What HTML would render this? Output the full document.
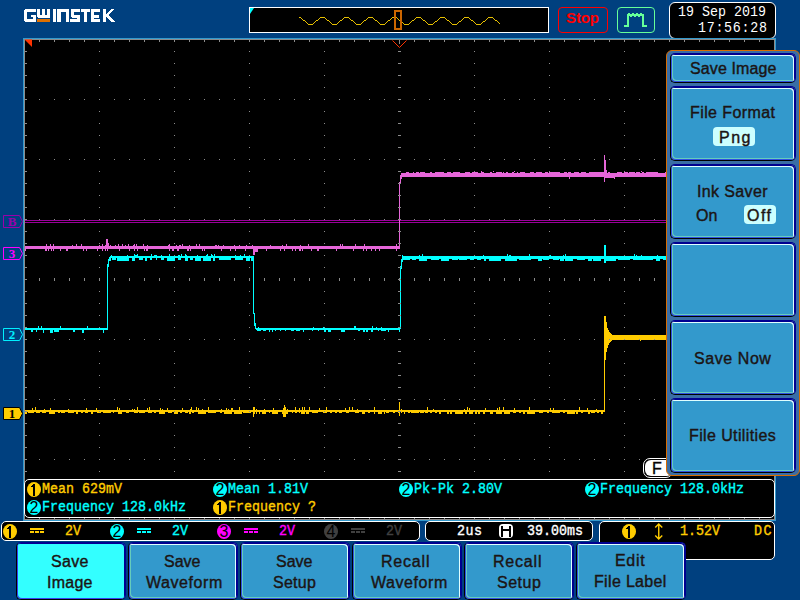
<!DOCTYPE html>
<html><head><meta charset="utf-8"><style>
html,body{margin:0;padding:0}
body{width:800px;height:600px;overflow:hidden;position:relative;background:#00407f}
.sb{position:absolute;font-family:"Liberation Sans",sans-serif;font-weight:bold;color:#1c1414;white-space:nowrap;line-height:1}
.tx{position:absolute;font-family:"Liberation Sans",sans-serif;white-space:nowrap;line-height:16px;-webkit-text-stroke:0.4px #1c1414}
.mono{position:absolute;font-family:"Liberation Mono",monospace;font-weight:normal;font-size:13.333px;line-height:16px;white-space:pre;-webkit-text-stroke:0.35px currentColor;transform:scaleY(1.14);transform-origin:0 0}
.mk{position:absolute;font-weight:bold;font-size:13px;line-height:15px;width:16px;text-align:center}
.cn{position:absolute;font-family:"Liberation Sans",sans-serif;font-size:16px;line-height:15px;width:14px;text-align:center}
.btn{position:absolute;box-sizing:border-box;border:1px solid;border-color:#000090 #000090 #000 #000;border-radius:5px;background:#3399cc;box-shadow:inset -1px 1px 0 #000090,inset 1px -1px 0 #3050e0,inset -2px 2px 0 #e0ffff,inset 2px -2px 0 #66ccbb}
.btn.sel{background:#33ffff;border-width:1px;box-shadow:inset 1px -1px 0 #3344ee,inset -1px 1px 0 #000090}
</style></head><body>
<svg width="120" height="30" style="position:absolute;left:0;top:0" shape-rendering="crispEdges">
<g fill="#fff">
<path d="M24,10L25,9H36V12H27V19H33V17H31V15H36V22H25L24,21Z"/>
<path d="M37,9h3v6h2v-6h3v6h2v-6h3v8l-1,1h-11l-1-1z"/>
<rect x="53" y="9" width="3" height="13"/>
<path d="M57,9h11l1,1v12h-3v-10h-5v10h-4z"/>
<path d="M71,9h9v3h-6v3h5l1,1v6h-10v-3h7v-1h-5l-1-1z"/>
<path d="M81,9h9v3h-3v10h-3v-10h-3z"/>
<path d="M91,9h9v3h-6v3h5v3h-5v1h6v3h-9z"/>
<path d="M103,9h3v5l5-5h3.5l-6,6 6.5,7h-4l-5-5.5v5.5h-3z"/>
</g>
<rect x="37" y="19" width="13" height="3" fill="#e07000"/>
</svg>
<div style="position:absolute;left:249px;top:7px;width:300px;height:26px;box-sizing:border-box;border:1px solid #fff;background:#000"></div>
<svg width="800" height="40" style="position:absolute;left:0;top:0">
<polygon points="250,8 254,8 250,14" fill="#00ffff"/>
<g fill="#e6bf00" shape-rendering="crispEdges"><rect x="299" y="17" width="1" height="1"/><rect x="300" y="17" width="1" height="1"/><rect x="301" y="18" width="1" height="1"/><rect x="302" y="19" width="1" height="1"/><rect x="303" y="20" width="1" height="1"/><rect x="304" y="20" width="1" height="1"/><rect x="305" y="21" width="1" height="1"/><rect x="306" y="22" width="1" height="1"/><rect x="307" y="23" width="1" height="1"/><rect x="308" y="24" width="1" height="1"/><rect x="309" y="24" width="1" height="1"/><rect x="310" y="24" width="1" height="1"/><rect x="311" y="24" width="1" height="1"/><rect x="312" y="24" width="1" height="1"/><rect x="313" y="23" width="1" height="1"/><rect x="314" y="22" width="1" height="1"/><rect x="315" y="21" width="1" height="1"/><rect x="316" y="20" width="1" height="1"/><rect x="317" y="20" width="1" height="1"/><rect x="318" y="19" width="1" height="1"/><rect x="319" y="18" width="1" height="1"/><rect x="320" y="17" width="1" height="1"/><rect x="321" y="17" width="1" height="1"/><rect x="322" y="17" width="1" height="1"/><rect x="323" y="17" width="1" height="1"/><rect x="324" y="17" width="1" height="1"/><rect x="325" y="18" width="1" height="1"/><rect x="326" y="19" width="1" height="1"/><rect x="327" y="20" width="1" height="1"/><rect x="328" y="20" width="1" height="1"/><rect x="329" y="21" width="1" height="1"/><rect x="330" y="22" width="1" height="1"/><rect x="331" y="23" width="1" height="1"/><rect x="332" y="24" width="1" height="1"/><rect x="333" y="24" width="1" height="1"/><rect x="334" y="24" width="1" height="1"/><rect x="335" y="24" width="1" height="1"/><rect x="336" y="24" width="1" height="1"/><rect x="337" y="23" width="1" height="1"/><rect x="338" y="22" width="1" height="1"/><rect x="339" y="21" width="1" height="1"/><rect x="340" y="20" width="1" height="1"/><rect x="341" y="20" width="1" height="1"/><rect x="342" y="19" width="1" height="1"/><rect x="343" y="18" width="1" height="1"/><rect x="344" y="17" width="1" height="1"/><rect x="345" y="17" width="1" height="1"/><rect x="346" y="17" width="1" height="1"/><rect x="347" y="17" width="1" height="1"/><rect x="348" y="17" width="1" height="1"/><rect x="349" y="18" width="1" height="1"/><rect x="350" y="19" width="1" height="1"/><rect x="351" y="20" width="1" height="1"/><rect x="352" y="20" width="1" height="1"/><rect x="353" y="21" width="1" height="1"/><rect x="354" y="22" width="1" height="1"/><rect x="355" y="23" width="1" height="1"/><rect x="356" y="24" width="1" height="1"/><rect x="357" y="24" width="1" height="1"/><rect x="358" y="24" width="1" height="1"/><rect x="359" y="24" width="1" height="1"/><rect x="360" y="24" width="1" height="1"/><rect x="361" y="23" width="1" height="1"/><rect x="362" y="22" width="1" height="1"/><rect x="363" y="21" width="1" height="1"/><rect x="364" y="20" width="1" height="1"/><rect x="365" y="20" width="1" height="1"/><rect x="366" y="19" width="1" height="1"/><rect x="367" y="18" width="1" height="1"/><rect x="368" y="17" width="1" height="1"/><rect x="369" y="17" width="1" height="1"/><rect x="370" y="17" width="1" height="1"/><rect x="371" y="17" width="1" height="1"/><rect x="372" y="17" width="1" height="1"/><rect x="373" y="18" width="1" height="1"/><rect x="374" y="19" width="1" height="1"/><rect x="375" y="20" width="1" height="1"/><rect x="376" y="20" width="1" height="1"/><rect x="377" y="21" width="1" height="1"/><rect x="378" y="22" width="1" height="1"/><rect x="379" y="23" width="1" height="1"/><rect x="380" y="24" width="1" height="1"/><rect x="381" y="24" width="1" height="1"/><rect x="382" y="24" width="1" height="1"/><rect x="383" y="24" width="1" height="1"/><rect x="384" y="24" width="1" height="1"/><rect x="385" y="23" width="1" height="1"/><rect x="386" y="22" width="1" height="1"/><rect x="387" y="21" width="1" height="1"/><rect x="388" y="20" width="1" height="1"/><rect x="389" y="20" width="1" height="1"/><rect x="390" y="19" width="1" height="1"/><rect x="391" y="18" width="1" height="1"/><rect x="392" y="17" width="1" height="1"/><rect x="393" y="17" width="1" height="1"/><rect x="394" y="17" width="1" height="1"/><rect x="395" y="17" width="1" height="1"/><rect x="396" y="17" width="1" height="1"/><rect x="397" y="18" width="1" height="1"/><rect x="398" y="19" width="1" height="1"/><rect x="399" y="20" width="1" height="1"/><rect x="400" y="20" width="1" height="1"/><rect x="401" y="21" width="1" height="1"/><rect x="402" y="22" width="1" height="1"/><rect x="403" y="23" width="1" height="1"/><rect x="404" y="24" width="1" height="1"/><rect x="405" y="24" width="1" height="1"/><rect x="406" y="24" width="1" height="1"/><rect x="407" y="24" width="1" height="1"/><rect x="408" y="24" width="1" height="1"/><rect x="409" y="23" width="1" height="1"/><rect x="410" y="22" width="1" height="1"/><rect x="411" y="21" width="1" height="1"/><rect x="412" y="20" width="1" height="1"/><rect x="413" y="20" width="1" height="1"/><rect x="414" y="19" width="1" height="1"/><rect x="415" y="18" width="1" height="1"/><rect x="416" y="17" width="1" height="1"/><rect x="417" y="17" width="1" height="1"/><rect x="418" y="17" width="1" height="1"/><rect x="419" y="17" width="1" height="1"/><rect x="420" y="17" width="1" height="1"/><rect x="421" y="18" width="1" height="1"/><rect x="422" y="19" width="1" height="1"/><rect x="423" y="20" width="1" height="1"/><rect x="424" y="20" width="1" height="1"/><rect x="425" y="21" width="1" height="1"/><rect x="426" y="22" width="1" height="1"/><rect x="427" y="23" width="1" height="1"/><rect x="428" y="24" width="1" height="1"/><rect x="429" y="24" width="1" height="1"/><rect x="430" y="24" width="1" height="1"/><rect x="431" y="24" width="1" height="1"/><rect x="432" y="24" width="1" height="1"/><rect x="433" y="23" width="1" height="1"/><rect x="434" y="22" width="1" height="1"/><rect x="435" y="21" width="1" height="1"/><rect x="436" y="21" width="1" height="1"/><rect x="437" y="20" width="1" height="1"/><rect x="438" y="19" width="1" height="1"/><rect x="439" y="18" width="1" height="1"/><rect x="440" y="17" width="1" height="1"/><rect x="441" y="17" width="1" height="1"/><rect x="442" y="17" width="1" height="1"/><rect x="443" y="17" width="1" height="1"/><rect x="444" y="17" width="1" height="1"/><rect x="445" y="18" width="1" height="1"/><rect x="446" y="19" width="1" height="1"/><rect x="447" y="20" width="1" height="1"/><rect x="448" y="20" width="1" height="1"/><rect x="449" y="21" width="1" height="1"/><rect x="450" y="22" width="1" height="1"/><rect x="451" y="23" width="1" height="1"/><rect x="452" y="24" width="1" height="1"/><rect x="453" y="24" width="1" height="1"/><rect x="454" y="24" width="1" height="1"/><rect x="455" y="24" width="1" height="1"/><rect x="456" y="24" width="1" height="1"/><rect x="457" y="23" width="1" height="1"/><rect x="458" y="22" width="1" height="1"/><rect x="459" y="21" width="1" height="1"/><rect x="460" y="21" width="1" height="1"/><rect x="461" y="20" width="1" height="1"/><rect x="462" y="19" width="1" height="1"/><rect x="463" y="18" width="1" height="1"/><rect x="464" y="17" width="1" height="1"/><rect x="465" y="17" width="1" height="1"/><rect x="466" y="17" width="1" height="1"/><rect x="467" y="17" width="1" height="1"/><rect x="468" y="17" width="1" height="1"/><rect x="469" y="18" width="1" height="1"/><rect x="470" y="19" width="1" height="1"/><rect x="471" y="20" width="1" height="1"/><rect x="472" y="20" width="1" height="1"/><rect x="473" y="21" width="1" height="1"/><rect x="474" y="22" width="1" height="1"/><rect x="475" y="23" width="1" height="1"/><rect x="476" y="24" width="1" height="1"/><rect x="477" y="24" width="1" height="1"/><rect x="478" y="24" width="1" height="1"/><rect x="479" y="24" width="1" height="1"/><rect x="480" y="24" width="1" height="1"/><rect x="481" y="23" width="1" height="1"/><rect x="482" y="22" width="1" height="1"/><rect x="483" y="21" width="1" height="1"/><rect x="484" y="21" width="1" height="1"/><rect x="485" y="20" width="1" height="1"/><rect x="486" y="19" width="1" height="1"/><rect x="487" y="18" width="1" height="1"/><rect x="488" y="17" width="1" height="1"/><rect x="489" y="17" width="1" height="1"/><rect x="490" y="17" width="1" height="1"/><rect x="491" y="17" width="1" height="1"/><rect x="492" y="17" width="1" height="1"/><rect x="493" y="18" width="1" height="1"/><rect x="494" y="19" width="1" height="1"/><rect x="495" y="20" width="1" height="1"/><rect x="496" y="20" width="1" height="1"/><rect x="497" y="21" width="1" height="1"/><rect x="498" y="22" width="1" height="1"/><rect x="499" y="23" width="1" height="1"/></g>
<rect x="395" y="11" width="6" height="18" fill="none" stroke="#cc6600" stroke-width="2"/>
</svg>
<div style="position:absolute;left:558px;top:7px;width:50px;height:26px;box-sizing:border-box;border:1px solid #ff0000;border-radius:4px"></div>
<div class="sb" style="left:566px;top:10px;font-size:15px;color:#ff0000;line-height:16px;letter-spacing:-0.1px">Stop</div>
<div style="position:absolute;left:617px;top:7px;width:38px;height:26px;box-sizing:border-box;border:1px solid #66ff99;border-radius:4px"></div>
<svg width="40" height="30" style="position:absolute;left:617px;top:0" shape-rendering="crispEdges">
<g fill="#66ff99"><rect x="7" y="25" width="4" height="2"/><rect x="10" y="14" width="2" height="13"/><rect x="25" y="14" width="2" height="13"/><rect x="26" y="25" width="4" height="2"/><rect x="10" y="14" width="17" height="2"/><rect x="11" y="13" width="2" height="1"/><rect x="15" y="13" width="2" height="1"/><rect x="19" y="13" width="2" height="1"/><rect x="23" y="13" width="2" height="1"/><rect x="13" y="16" width="2" height="1"/><rect x="17" y="16" width="2" height="1"/><rect x="21" y="16" width="2" height="1"/></g>
</svg>
<div style="position:absolute;left:669px;top:2px;width:107px;height:37px;box-sizing:border-box;border:1px solid #fff;border-radius:6px;background:#000"></div>
<div class="mono" style="left:678px;top:3px;color:#fff;-webkit-text-stroke:0">19 Sep 2019</div>
<div class="mono" style="left:698px;top:19px;color:#fff;letter-spacing:0.7px;-webkit-text-stroke:0">17:56:28</div>

<svg width="800" height="600" style="position:absolute;left:0;top:0" shape-rendering="crispEdges"><rect x="23" y="38" width="753" height="483" fill="#3399cc"/><rect x="24" y="39" width="751" height="481" fill="#8c8c8c"/><rect x="25" y="40" width="749" height="479" fill="#000"/><rect x="25" y="220" width="641" height="1" fill="#990099"/><rect x="25" y="222" width="641" height="1" fill="#990099"/><rect x="25" y="246" width="374" height="3" fill="#e666d9"/><rect x="25" y="249" width="1" height="2" fill="#e666d9"/><rect x="45" y="249" width="1" height="2" fill="#e666d9"/><rect x="46" y="244" width="1" height="2" fill="#e666d9"/><rect x="46" y="249" width="1" height="2" fill="#e666d9"/><rect x="48" y="249" width="1" height="2" fill="#e666d9"/><rect x="50" y="244" width="1" height="2" fill="#e666d9"/><rect x="51" y="249" width="1" height="2" fill="#e666d9"/><rect x="53" y="244" width="1" height="2" fill="#e666d9"/><rect x="53" y="249" width="1" height="2" fill="#e666d9"/><rect x="60" y="249" width="1" height="2" fill="#e666d9"/><rect x="66" y="249" width="1" height="2" fill="#e666d9"/><rect x="67" y="249" width="1" height="2" fill="#e666d9"/><rect x="72" y="245" width="1" height="1" fill="#e666d9"/><rect x="76" y="244" width="1" height="2" fill="#e666d9"/><rect x="81" y="244" width="1" height="2" fill="#e666d9"/><rect x="83" y="249" width="1" height="2" fill="#e666d9"/><rect x="86" y="249" width="1" height="2" fill="#e666d9"/><rect x="97" y="249" width="1" height="2" fill="#e666d9"/><rect x="99" y="245" width="1" height="1" fill="#e666d9"/><rect x="102" y="244" width="1" height="2" fill="#e666d9"/><rect x="102" y="249" width="1" height="2" fill="#e666d9"/><rect x="105" y="245" width="1" height="1" fill="#e666d9"/><rect x="105" y="249" width="1" height="2" fill="#e666d9"/><rect x="107" y="249" width="1" height="2" fill="#e666d9"/><rect x="110" y="245" width="1" height="1" fill="#e666d9"/><rect x="115" y="245" width="1" height="1" fill="#e666d9"/><rect x="118" y="244" width="1" height="2" fill="#e666d9"/><rect x="119" y="249" width="1" height="2" fill="#e666d9"/><rect x="122" y="244" width="1" height="2" fill="#e666d9"/><rect x="125" y="245" width="1" height="1" fill="#e666d9"/><rect x="128" y="244" width="1" height="2" fill="#e666d9"/><rect x="129" y="249" width="1" height="2" fill="#e666d9"/><rect x="133" y="245" width="1" height="1" fill="#e666d9"/><rect x="134" y="244" width="1" height="2" fill="#e666d9"/><rect x="134" y="249" width="1" height="2" fill="#e666d9"/><rect x="136" y="244" width="1" height="2" fill="#e666d9"/><rect x="137" y="249" width="1" height="2" fill="#e666d9"/><rect x="143" y="244" width="1" height="2" fill="#e666d9"/><rect x="144" y="249" width="1" height="2" fill="#e666d9"/><rect x="146" y="249" width="1" height="2" fill="#e666d9"/><rect x="147" y="245" width="1" height="1" fill="#e666d9"/><rect x="147" y="249" width="1" height="2" fill="#e666d9"/><rect x="168" y="245" width="1" height="1" fill="#e666d9"/><rect x="169" y="244" width="1" height="2" fill="#e666d9"/><rect x="169" y="249" width="1" height="2" fill="#e666d9"/><rect x="172" y="249" width="1" height="2" fill="#e666d9"/><rect x="173" y="249" width="1" height="2" fill="#e666d9"/><rect x="176" y="245" width="1" height="1" fill="#e666d9"/><rect x="177" y="249" width="1" height="2" fill="#e666d9"/><rect x="178" y="249" width="1" height="2" fill="#e666d9"/><rect x="179" y="245" width="1" height="1" fill="#e666d9"/><rect x="180" y="245" width="1" height="1" fill="#e666d9"/><rect x="182" y="244" width="1" height="2" fill="#e666d9"/><rect x="187" y="249" width="1" height="2" fill="#e666d9"/><rect x="188" y="249" width="1" height="2" fill="#e666d9"/><rect x="189" y="245" width="1" height="1" fill="#e666d9"/><rect x="190" y="249" width="1" height="2" fill="#e666d9"/><rect x="196" y="244" width="1" height="2" fill="#e666d9"/><rect x="199" y="244" width="1" height="2" fill="#e666d9"/><rect x="202" y="249" width="1" height="2" fill="#e666d9"/><rect x="204" y="249" width="1" height="2" fill="#e666d9"/><rect x="215" y="245" width="1" height="1" fill="#e666d9"/><rect x="216" y="245" width="1" height="1" fill="#e666d9"/><rect x="218" y="245" width="1" height="1" fill="#e666d9"/><rect x="221" y="249" width="1" height="2" fill="#e666d9"/><rect x="223" y="245" width="1" height="1" fill="#e666d9"/><rect x="230" y="249" width="1" height="2" fill="#e666d9"/><rect x="234" y="245" width="1" height="1" fill="#e666d9"/><rect x="235" y="249" width="1" height="2" fill="#e666d9"/><rect x="239" y="245" width="1" height="1" fill="#e666d9"/><rect x="245" y="249" width="1" height="2" fill="#e666d9"/><rect x="246" y="245" width="1" height="1" fill="#e666d9"/><rect x="252" y="245" width="1" height="1" fill="#e666d9"/><rect x="266" y="249" width="1" height="2" fill="#e666d9"/><rect x="270" y="245" width="1" height="1" fill="#e666d9"/><rect x="280" y="249" width="1" height="2" fill="#e666d9"/><rect x="282" y="245" width="1" height="1" fill="#e666d9"/><rect x="284" y="249" width="1" height="2" fill="#e666d9"/><rect x="286" y="244" width="1" height="2" fill="#e666d9"/><rect x="292" y="249" width="1" height="2" fill="#e666d9"/><rect x="295" y="249" width="1" height="2" fill="#e666d9"/><rect x="299" y="249" width="1" height="2" fill="#e666d9"/><rect x="300" y="245" width="1" height="1" fill="#e666d9"/><rect x="300" y="249" width="1" height="2" fill="#e666d9"/><rect x="302" y="249" width="1" height="2" fill="#e666d9"/><rect x="308" y="244" width="1" height="2" fill="#e666d9"/><rect x="311" y="249" width="1" height="2" fill="#e666d9"/><rect x="317" y="249" width="1" height="2" fill="#e666d9"/><rect x="318" y="249" width="1" height="2" fill="#e666d9"/><rect x="336" y="249" width="1" height="2" fill="#e666d9"/><rect x="340" y="244" width="1" height="2" fill="#e666d9"/><rect x="342" y="244" width="1" height="2" fill="#e666d9"/><rect x="353" y="249" width="1" height="2" fill="#e666d9"/><rect x="355" y="244" width="1" height="2" fill="#e666d9"/><rect x="363" y="249" width="1" height="2" fill="#e666d9"/><rect x="364" y="244" width="1" height="2" fill="#e666d9"/><rect x="366" y="249" width="1" height="2" fill="#e666d9"/><rect x="371" y="249" width="1" height="2" fill="#e666d9"/><rect x="375" y="249" width="1" height="2" fill="#e666d9"/><rect x="379" y="249" width="1" height="2" fill="#e666d9"/><rect x="396" y="244" width="1" height="2" fill="#e666d9"/><rect x="396" y="249" width="1" height="2" fill="#e666d9"/><rect x="399" y="182" width="1" height="67" fill="#e666d9"/><rect x="400" y="175" width="1" height="9" fill="#e666d9"/><rect x="401" y="173" width="1" height="6" fill="#e666d9"/><rect x="401" y="173" width="265" height="4" fill="#e666d9"/><rect x="406" y="172" width="1" height="1" fill="#e666d9"/><rect x="407" y="172" width="2" height="1" fill="#e666d9"/><rect x="413" y="172" width="1" height="1" fill="#e666d9"/><rect x="416" y="172" width="1" height="1" fill="#e666d9"/><rect x="417" y="172" width="2" height="1" fill="#e666d9"/><rect x="420" y="172" width="2" height="1" fill="#e666d9"/><rect x="422" y="172" width="3" height="1" fill="#e666d9"/><rect x="430" y="172" width="2" height="1" fill="#e666d9"/><rect x="435" y="172" width="3" height="1" fill="#e666d9"/><rect x="438" y="172" width="1" height="1" fill="#e666d9"/><rect x="439" y="172" width="3" height="1" fill="#e666d9"/><rect x="442" y="172" width="2" height="1" fill="#e666d9"/><rect x="447" y="172" width="2" height="1" fill="#e666d9"/><rect x="449" y="172" width="2" height="1" fill="#e666d9"/><rect x="453" y="172" width="2" height="1" fill="#e666d9"/><rect x="455" y="172" width="2" height="1" fill="#e666d9"/><rect x="457" y="172" width="3" height="1" fill="#e666d9"/><rect x="465" y="172" width="2" height="1" fill="#e666d9"/><rect x="467" y="172" width="3" height="1" fill="#e666d9"/><rect x="472" y="172" width="2" height="1" fill="#e666d9"/><rect x="474" y="172" width="2" height="1" fill="#e666d9"/><rect x="476" y="172" width="1" height="1" fill="#e666d9"/><rect x="477" y="172" width="1" height="1" fill="#e666d9"/><rect x="481" y="172" width="3" height="1" fill="#e666d9"/><rect x="490" y="172" width="2" height="1" fill="#e666d9"/><rect x="496" y="172" width="1" height="1" fill="#e666d9"/><rect x="497" y="172" width="2" height="1" fill="#e666d9"/><rect x="499" y="172" width="3" height="1" fill="#e666d9"/><rect x="503" y="172" width="1" height="1" fill="#e666d9"/><rect x="506" y="172" width="2" height="1" fill="#e666d9"/><rect x="512" y="172" width="2" height="1" fill="#e666d9"/><rect x="517" y="172" width="1" height="1" fill="#e666d9"/><rect x="520" y="172" width="1" height="1" fill="#e666d9"/><rect x="521" y="172" width="1" height="1" fill="#e666d9"/><rect x="522" y="172" width="3" height="1" fill="#e666d9"/><rect x="530" y="172" width="2" height="1" fill="#e666d9"/><rect x="532" y="172" width="1" height="1" fill="#e666d9"/><rect x="533" y="172" width="1" height="1" fill="#e666d9"/><rect x="536" y="172" width="2" height="1" fill="#e666d9"/><rect x="538" y="172" width="3" height="1" fill="#e666d9"/><rect x="541" y="172" width="1" height="1" fill="#e666d9"/><rect x="545" y="172" width="1" height="1" fill="#e666d9"/><rect x="546" y="172" width="2" height="1" fill="#e666d9"/><rect x="549" y="172" width="2" height="1" fill="#e666d9"/><rect x="551" y="172" width="3" height="1" fill="#e666d9"/><rect x="554" y="172" width="3" height="1" fill="#e666d9"/><rect x="557" y="172" width="3" height="1" fill="#e666d9"/><rect x="564" y="172" width="3" height="1" fill="#e666d9"/><rect x="568" y="172" width="3" height="1" fill="#e666d9"/><rect x="574" y="172" width="2" height="1" fill="#e666d9"/><rect x="576" y="172" width="3" height="1" fill="#e666d9"/><rect x="581" y="172" width="2" height="1" fill="#e666d9"/><rect x="583" y="172" width="1" height="1" fill="#e666d9"/><rect x="584" y="172" width="2" height="1" fill="#e666d9"/><rect x="589" y="172" width="2" height="1" fill="#e666d9"/><rect x="591" y="172" width="1" height="1" fill="#e666d9"/><rect x="592" y="172" width="2" height="1" fill="#e666d9"/><rect x="594" y="172" width="1" height="1" fill="#e666d9"/><rect x="595" y="172" width="3" height="1" fill="#e666d9"/><rect x="598" y="172" width="3" height="1" fill="#e666d9"/><rect x="601" y="172" width="2" height="1" fill="#e666d9"/><rect x="603" y="172" width="1" height="1" fill="#e666d9"/><rect x="604" y="172" width="1" height="1" fill="#e666d9"/><rect x="605" y="172" width="1" height="1" fill="#e666d9"/><rect x="608" y="172" width="2" height="1" fill="#e666d9"/><rect x="617" y="172" width="3" height="1" fill="#e666d9"/><rect x="620" y="172" width="2" height="1" fill="#e666d9"/><rect x="624" y="172" width="1" height="1" fill="#e666d9"/><rect x="625" y="172" width="1" height="1" fill="#e666d9"/><rect x="626" y="172" width="2" height="1" fill="#e666d9"/><rect x="629" y="172" width="1" height="1" fill="#e666d9"/><rect x="630" y="172" width="3" height="1" fill="#e666d9"/><rect x="633" y="172" width="2" height="1" fill="#e666d9"/><rect x="636" y="172" width="3" height="1" fill="#e666d9"/><rect x="639" y="172" width="1" height="1" fill="#e666d9"/><rect x="642" y="172" width="2" height="1" fill="#e666d9"/><rect x="646" y="172" width="1" height="1" fill="#e666d9"/><rect x="647" y="172" width="2" height="1" fill="#e666d9"/><rect x="649" y="172" width="2" height="1" fill="#e666d9"/><rect x="651" y="172" width="3" height="1" fill="#e666d9"/><rect x="654" y="172" width="1" height="1" fill="#e666d9"/><rect x="655" y="172" width="1" height="1" fill="#e666d9"/><rect x="656" y="172" width="2" height="1" fill="#e666d9"/><rect x="665" y="172" width="1" height="1" fill="#e666d9"/><rect x="474" y="171" width="1" height="1" fill="#e666d9"/><rect x="481" y="171" width="1" height="1" fill="#e666d9"/><rect x="493" y="171" width="1" height="1" fill="#e666d9"/><rect x="514" y="171" width="1" height="1" fill="#e666d9"/><rect x="569" y="177" width="1" height="2" fill="#e666d9"/><rect x="614" y="177" width="1" height="2" fill="#e666d9"/><rect x="641" y="171" width="1" height="1" fill="#e666d9"/><rect x="106" y="239" width="2" height="8" fill="#e666d9"/><rect x="108" y="243" width="1" height="4" fill="#e666d9"/><rect x="604" y="155" width="1" height="27" fill="#e666d9"/><rect x="605" y="160" width="1" height="18" fill="#e666d9"/><rect x="606" y="176" width="9" height="2" fill="#e666d9"/><rect x="605" y="170" width="2" height="8" fill="#e666d9"/><rect x="253" y="246" width="2" height="9" fill="#e666d9"/><rect x="255" y="249" width="3" height="3" fill="#e666d9"/><rect x="25" y="328" width="83" height="2" fill="#00ffff"/><rect x="31" y="330" width="2" height="2" fill="#00ffff"/><rect x="36" y="330" width="1" height="2" fill="#00ffff"/><rect x="43" y="330" width="1" height="3" fill="#00ffff"/><rect x="50" y="330" width="3" height="3" fill="#00ffff"/><rect x="54" y="330" width="5" height="2" fill="#00ffff"/><rect x="73" y="330" width="2" height="2" fill="#00ffff"/><rect x="82" y="330" width="2" height="3" fill="#00ffff"/><rect x="103" y="330" width="1" height="3" fill="#00ffff"/><rect x="38" y="326" width="1" height="2" fill="#00ffff"/><rect x="41" y="326" width="1" height="2" fill="#00ffff"/><rect x="60" y="326" width="1" height="2" fill="#00ffff"/><rect x="87" y="326" width="1" height="2" fill="#00ffff"/><rect x="107" y="264" width="1" height="66" fill="#00ffff"/><rect x="108" y="259" width="1" height="8" fill="#00ffff"/><rect x="109" y="257" width="2" height="4" fill="#00ffff"/><rect x="110" y="256" width="143" height="2" fill="#00ffff"/><rect x="112" y="258" width="4" height="2" fill="#00ffff"/><rect x="117" y="258" width="12" height="3" fill="#00ffff"/><rect x="132" y="258" width="3" height="3" fill="#00ffff"/><rect x="139" y="258" width="4" height="2" fill="#00ffff"/><rect x="145" y="258" width="2" height="3" fill="#00ffff"/><rect x="150" y="258" width="2" height="2" fill="#00ffff"/><rect x="156" y="258" width="1" height="2" fill="#00ffff"/><rect x="161" y="258" width="3" height="2" fill="#00ffff"/><rect x="167" y="258" width="8" height="3" fill="#00ffff"/><rect x="178" y="258" width="3" height="2" fill="#00ffff"/><rect x="185" y="258" width="3" height="3" fill="#00ffff"/><rect x="190" y="258" width="3" height="2" fill="#00ffff"/><rect x="195" y="258" width="6" height="3" fill="#00ffff"/><rect x="203" y="258" width="8" height="3" fill="#00ffff"/><rect x="213" y="258" width="2" height="3" fill="#00ffff"/><rect x="219" y="258" width="12" height="2" fill="#00ffff"/><rect x="235" y="258" width="8" height="2" fill="#00ffff"/><rect x="246" y="258" width="4" height="3" fill="#00ffff"/><rect x="251" y="258" width="2" height="3" fill="#00ffff"/><rect x="111" y="255" width="1" height="1" fill="#00ffff"/><rect x="127" y="255" width="1" height="1" fill="#00ffff"/><rect x="134" y="254" width="1" height="2" fill="#00ffff"/><rect x="135" y="255" width="1" height="1" fill="#00ffff"/><rect x="136" y="255" width="1" height="1" fill="#00ffff"/><rect x="137" y="254" width="1" height="2" fill="#00ffff"/><rect x="151" y="254" width="1" height="2" fill="#00ffff"/><rect x="154" y="255" width="1" height="1" fill="#00ffff"/><rect x="155" y="255" width="1" height="1" fill="#00ffff"/><rect x="156" y="255" width="1" height="1" fill="#00ffff"/><rect x="161" y="255" width="1" height="1" fill="#00ffff"/><rect x="169" y="254" width="1" height="2" fill="#00ffff"/><rect x="178" y="255" width="1" height="1" fill="#00ffff"/><rect x="179" y="255" width="1" height="1" fill="#00ffff"/><rect x="181" y="254" width="1" height="2" fill="#00ffff"/><rect x="185" y="254" width="1" height="2" fill="#00ffff"/><rect x="186" y="255" width="1" height="1" fill="#00ffff"/><rect x="197" y="255" width="1" height="1" fill="#00ffff"/><rect x="206" y="255" width="1" height="1" fill="#00ffff"/><rect x="207" y="254" width="1" height="2" fill="#00ffff"/><rect x="211" y="254" width="1" height="2" fill="#00ffff"/><rect x="212" y="255" width="1" height="1" fill="#00ffff"/><rect x="214" y="254" width="1" height="2" fill="#00ffff"/><rect x="235" y="255" width="1" height="1" fill="#00ffff"/><rect x="240" y="255" width="1" height="1" fill="#00ffff"/><rect x="244" y="254" width="1" height="2" fill="#00ffff"/><rect x="253" y="256" width="1" height="58" fill="#00ffff"/><rect x="254" y="313" width="1" height="13" fill="#00ffff"/><rect x="255" y="323" width="1" height="6" fill="#00ffff"/><rect x="256" y="328" width="144" height="2" fill="#00ffff"/><rect x="257" y="330" width="4" height="1" fill="#00ffff"/><rect x="263" y="330" width="3" height="1" fill="#00ffff"/><rect x="269" y="330" width="1" height="2" fill="#00ffff"/><rect x="272" y="330" width="1" height="2" fill="#00ffff"/><rect x="275" y="330" width="1" height="1" fill="#00ffff"/><rect x="280" y="330" width="1" height="1" fill="#00ffff"/><rect x="285" y="330" width="1" height="1" fill="#00ffff"/><rect x="291" y="330" width="3" height="1" fill="#00ffff"/><rect x="296" y="330" width="4" height="1" fill="#00ffff"/><rect x="303" y="330" width="1" height="2" fill="#00ffff"/><rect x="312" y="330" width="1" height="1" fill="#00ffff"/><rect x="318" y="330" width="1" height="1" fill="#00ffff"/><rect x="324" y="330" width="2" height="2" fill="#00ffff"/><rect x="328" y="330" width="3" height="2" fill="#00ffff"/><rect x="341" y="330" width="4" height="2" fill="#00ffff"/><rect x="358" y="330" width="2" height="1" fill="#00ffff"/><rect x="363" y="330" width="2" height="2" fill="#00ffff"/><rect x="366" y="330" width="2" height="2" fill="#00ffff"/><rect x="371" y="330" width="2" height="2" fill="#00ffff"/><rect x="378" y="330" width="1" height="1" fill="#00ffff"/><rect x="381" y="330" width="5" height="1" fill="#00ffff"/><rect x="388" y="330" width="1" height="2" fill="#00ffff"/><rect x="399" y="330" width="1" height="2" fill="#00ffff"/><rect x="258" y="327" width="1" height="1" fill="#00ffff"/><rect x="313" y="327" width="1" height="1" fill="#00ffff"/><rect x="323" y="327" width="1" height="1" fill="#00ffff"/><rect x="354" y="326" width="1" height="2" fill="#00ffff"/><rect x="355" y="326" width="1" height="2" fill="#00ffff"/><rect x="372" y="326" width="1" height="2" fill="#00ffff"/><rect x="376" y="327" width="1" height="1" fill="#00ffff"/><rect x="381" y="327" width="1" height="1" fill="#00ffff"/><rect x="400" y="266" width="1" height="63" fill="#00ffff"/><rect x="401" y="259" width="1" height="10" fill="#00ffff"/><rect x="402" y="257" width="1" height="5" fill="#00ffff"/><rect x="402" y="256" width="264" height="3" fill="#00ffff"/><rect x="402" y="259" width="8" height="1" fill="#00ffff"/><rect x="412" y="259" width="4" height="1" fill="#00ffff"/><rect x="419" y="259" width="8" height="2" fill="#00ffff"/><rect x="431" y="259" width="8" height="1" fill="#00ffff"/><rect x="441" y="259" width="8" height="2" fill="#00ffff"/><rect x="452" y="259" width="6" height="1" fill="#00ffff"/><rect x="459" y="259" width="8" height="1" fill="#00ffff"/><rect x="470" y="259" width="4" height="1" fill="#00ffff"/><rect x="477" y="259" width="4" height="1" fill="#00ffff"/><rect x="484" y="259" width="2" height="2" fill="#00ffff"/><rect x="489" y="259" width="12" height="2" fill="#00ffff"/><rect x="505" y="259" width="12" height="2" fill="#00ffff"/><rect x="519" y="259" width="12" height="1" fill="#00ffff"/><rect x="538" y="259" width="4" height="2" fill="#00ffff"/><rect x="543" y="259" width="6" height="1" fill="#00ffff"/><rect x="553" y="259" width="6" height="1" fill="#00ffff"/><rect x="560" y="259" width="4" height="2" fill="#00ffff"/><rect x="565" y="259" width="8" height="2" fill="#00ffff"/><rect x="577" y="259" width="8" height="1" fill="#00ffff"/><rect x="588" y="259" width="4" height="2" fill="#00ffff"/><rect x="593" y="259" width="8" height="2" fill="#00ffff"/><rect x="604" y="259" width="12" height="2" fill="#00ffff"/><rect x="618" y="259" width="12" height="1" fill="#00ffff"/><rect x="633" y="259" width="20" height="1" fill="#00ffff"/><rect x="656" y="259" width="4" height="2" fill="#00ffff"/><rect x="663" y="259" width="3" height="1" fill="#00ffff"/><rect x="402" y="255" width="1" height="1" fill="#00ffff"/><rect x="419" y="255" width="1" height="1" fill="#00ffff"/><rect x="422" y="254" width="1" height="2" fill="#00ffff"/><rect x="483" y="255" width="1" height="1" fill="#00ffff"/><rect x="507" y="254" width="1" height="2" fill="#00ffff"/><rect x="509" y="255" width="1" height="1" fill="#00ffff"/><rect x="510" y="255" width="1" height="1" fill="#00ffff"/><rect x="529" y="254" width="1" height="2" fill="#00ffff"/><rect x="550" y="255" width="1" height="1" fill="#00ffff"/><rect x="563" y="255" width="1" height="1" fill="#00ffff"/><rect x="565" y="254" width="1" height="2" fill="#00ffff"/><rect x="634" y="254" width="1" height="2" fill="#00ffff"/><rect x="636" y="255" width="1" height="1" fill="#00ffff"/><rect x="641" y="255" width="1" height="1" fill="#00ffff"/><rect x="657" y="255" width="1" height="1" fill="#00ffff"/><rect x="604" y="245" width="2" height="12" fill="#00ffff"/><rect x="604" y="258" width="2" height="5" fill="#00ffff"/><rect x="25" y="410" width="579" height="2" fill="#ffcc00"/><rect x="25" y="412" width="2" height="2" fill="#ffcc00"/><rect x="28" y="412" width="6" height="1" fill="#ffcc00"/><rect x="36" y="412" width="4" height="1" fill="#ffcc00"/><rect x="42" y="412" width="4" height="1" fill="#ffcc00"/><rect x="49" y="412" width="6" height="2" fill="#ffcc00"/><rect x="58" y="412" width="2" height="1" fill="#ffcc00"/><rect x="61" y="412" width="4" height="1" fill="#ffcc00"/><rect x="68" y="412" width="6" height="1" fill="#ffcc00"/><rect x="76" y="412" width="2" height="2" fill="#ffcc00"/><rect x="81" y="412" width="2" height="1" fill="#ffcc00"/><rect x="85" y="412" width="3" height="1" fill="#ffcc00"/><rect x="91" y="412" width="2" height="2" fill="#ffcc00"/><rect x="97" y="412" width="4" height="1" fill="#ffcc00"/><rect x="103" y="412" width="8" height="1" fill="#ffcc00"/><rect x="113" y="412" width="1" height="1" fill="#ffcc00"/><rect x="118" y="412" width="4" height="2" fill="#ffcc00"/><rect x="126" y="412" width="3" height="1" fill="#ffcc00"/><rect x="134" y="412" width="4" height="1" fill="#ffcc00"/><rect x="139" y="412" width="6" height="1" fill="#ffcc00"/><rect x="148" y="412" width="4" height="1" fill="#ffcc00"/><rect x="154" y="412" width="2" height="1" fill="#ffcc00"/><rect x="159" y="412" width="6" height="2" fill="#ffcc00"/><rect x="168" y="412" width="4" height="1" fill="#ffcc00"/><rect x="174" y="412" width="4" height="2" fill="#ffcc00"/><rect x="180" y="412" width="2" height="1" fill="#ffcc00"/><rect x="185" y="412" width="3" height="1" fill="#ffcc00"/><rect x="189" y="412" width="2" height="2" fill="#ffcc00"/><rect x="192" y="412" width="2" height="1" fill="#ffcc00"/><rect x="198" y="412" width="8" height="2" fill="#ffcc00"/><rect x="208" y="412" width="8" height="1" fill="#ffcc00"/><rect x="220" y="412" width="2" height="1" fill="#ffcc00"/><rect x="224" y="412" width="8" height="2" fill="#ffcc00"/><rect x="234" y="412" width="8" height="2" fill="#ffcc00"/><rect x="243" y="412" width="8" height="1" fill="#ffcc00"/><rect x="256" y="412" width="1" height="2" fill="#ffcc00"/><rect x="259" y="412" width="1" height="2" fill="#ffcc00"/><rect x="262" y="412" width="4" height="2" fill="#ffcc00"/><rect x="269" y="412" width="1" height="1" fill="#ffcc00"/><rect x="272" y="412" width="6" height="2" fill="#ffcc00"/><rect x="282" y="412" width="6" height="2" fill="#ffcc00"/><rect x="292" y="412" width="1" height="1" fill="#ffcc00"/><rect x="295" y="412" width="2" height="1" fill="#ffcc00"/><rect x="299" y="412" width="1" height="1" fill="#ffcc00"/><rect x="301" y="412" width="4" height="2" fill="#ffcc00"/><rect x="306" y="412" width="3" height="2" fill="#ffcc00"/><rect x="312" y="412" width="6" height="1" fill="#ffcc00"/><rect x="323" y="412" width="4" height="1" fill="#ffcc00"/><rect x="330" y="412" width="2" height="1" fill="#ffcc00"/><rect x="335" y="412" width="2" height="1" fill="#ffcc00"/><rect x="339" y="412" width="3" height="1" fill="#ffcc00"/><rect x="346" y="412" width="3" height="1" fill="#ffcc00"/><rect x="355" y="412" width="4" height="1" fill="#ffcc00"/><rect x="362" y="412" width="3" height="2" fill="#ffcc00"/><rect x="368" y="412" width="2" height="1" fill="#ffcc00"/><rect x="374" y="412" width="1" height="2" fill="#ffcc00"/><rect x="378" y="412" width="4" height="2" fill="#ffcc00"/><rect x="384" y="412" width="1" height="2" fill="#ffcc00"/><rect x="386" y="412" width="3" height="1" fill="#ffcc00"/><rect x="393" y="412" width="2" height="1" fill="#ffcc00"/><rect x="398" y="412" width="2" height="1" fill="#ffcc00"/><rect x="401" y="412" width="1" height="1" fill="#ffcc00"/><rect x="404" y="412" width="1" height="2" fill="#ffcc00"/><rect x="408" y="412" width="2" height="1" fill="#ffcc00"/><rect x="411" y="412" width="8" height="1" fill="#ffcc00"/><rect x="420" y="412" width="4" height="1" fill="#ffcc00"/><rect x="425" y="412" width="3" height="1" fill="#ffcc00"/><rect x="430" y="412" width="2" height="1" fill="#ffcc00"/><rect x="435" y="412" width="2" height="1" fill="#ffcc00"/><rect x="439" y="412" width="2" height="2" fill="#ffcc00"/><rect x="447" y="412" width="2" height="2" fill="#ffcc00"/><rect x="450" y="412" width="2" height="2" fill="#ffcc00"/><rect x="455" y="412" width="8" height="2" fill="#ffcc00"/><rect x="465" y="412" width="2" height="2" fill="#ffcc00"/><rect x="469" y="412" width="4" height="2" fill="#ffcc00"/><rect x="475" y="412" width="2" height="2" fill="#ffcc00"/><rect x="478" y="412" width="2" height="2" fill="#ffcc00"/><rect x="483" y="412" width="2" height="2" fill="#ffcc00"/><rect x="490" y="412" width="3" height="2" fill="#ffcc00"/><rect x="496" y="412" width="6" height="2" fill="#ffcc00"/><rect x="504" y="412" width="6" height="2" fill="#ffcc00"/><rect x="513" y="412" width="3" height="1" fill="#ffcc00"/><rect x="519" y="412" width="2" height="1" fill="#ffcc00"/><rect x="523" y="412" width="2" height="2" fill="#ffcc00"/><rect x="527" y="412" width="8" height="2" fill="#ffcc00"/><rect x="539" y="412" width="4" height="1" fill="#ffcc00"/><rect x="547" y="412" width="2" height="1" fill="#ffcc00"/><rect x="552" y="412" width="8" height="1" fill="#ffcc00"/><rect x="563" y="412" width="2" height="1" fill="#ffcc00"/><rect x="567" y="412" width="8" height="2" fill="#ffcc00"/><rect x="576" y="412" width="2" height="2" fill="#ffcc00"/><rect x="581" y="412" width="2" height="1" fill="#ffcc00"/><rect x="588" y="412" width="2" height="2" fill="#ffcc00"/><rect x="591" y="412" width="4" height="1" fill="#ffcc00"/><rect x="597" y="412" width="2" height="1" fill="#ffcc00"/><rect x="601" y="412" width="2" height="2" fill="#ffcc00"/><rect x="32" y="408" width="1" height="2" fill="#ffcc00"/><rect x="35" y="407" width="1" height="3" fill="#ffcc00"/><rect x="44" y="409" width="1" height="1" fill="#ffcc00"/><rect x="50" y="408" width="1" height="2" fill="#ffcc00"/><rect x="68" y="409" width="1" height="1" fill="#ffcc00"/><rect x="86" y="408" width="1" height="2" fill="#ffcc00"/><rect x="96" y="408" width="1" height="2" fill="#ffcc00"/><rect x="117" y="407" width="1" height="3" fill="#ffcc00"/><rect x="119" y="408" width="1" height="2" fill="#ffcc00"/><rect x="132" y="409" width="1" height="1" fill="#ffcc00"/><rect x="134" y="409" width="1" height="1" fill="#ffcc00"/><rect x="137" y="407" width="1" height="3" fill="#ffcc00"/><rect x="147" y="408" width="1" height="2" fill="#ffcc00"/><rect x="149" y="407" width="1" height="3" fill="#ffcc00"/><rect x="160" y="408" width="1" height="2" fill="#ffcc00"/><rect x="162" y="409" width="1" height="1" fill="#ffcc00"/><rect x="167" y="408" width="1" height="2" fill="#ffcc00"/><rect x="182" y="408" width="1" height="2" fill="#ffcc00"/><rect x="190" y="409" width="1" height="1" fill="#ffcc00"/><rect x="191" y="407" width="1" height="3" fill="#ffcc00"/><rect x="196" y="407" width="1" height="3" fill="#ffcc00"/><rect x="198" y="408" width="1" height="2" fill="#ffcc00"/><rect x="202" y="409" width="1" height="1" fill="#ffcc00"/><rect x="208" y="407" width="1" height="3" fill="#ffcc00"/><rect x="221" y="409" width="1" height="1" fill="#ffcc00"/><rect x="226" y="408" width="1" height="2" fill="#ffcc00"/><rect x="228" y="409" width="1" height="1" fill="#ffcc00"/><rect x="231" y="408" width="1" height="2" fill="#ffcc00"/><rect x="232" y="408" width="1" height="2" fill="#ffcc00"/><rect x="239" y="407" width="1" height="3" fill="#ffcc00"/><rect x="256" y="409" width="1" height="1" fill="#ffcc00"/><rect x="264" y="409" width="1" height="1" fill="#ffcc00"/><rect x="273" y="408" width="1" height="2" fill="#ffcc00"/><rect x="283" y="409" width="1" height="1" fill="#ffcc00"/><rect x="284" y="407" width="1" height="3" fill="#ffcc00"/><rect x="285" y="409" width="1" height="1" fill="#ffcc00"/><rect x="287" y="409" width="1" height="1" fill="#ffcc00"/><rect x="295" y="407" width="1" height="3" fill="#ffcc00"/><rect x="299" y="408" width="1" height="2" fill="#ffcc00"/><rect x="302" y="407" width="1" height="3" fill="#ffcc00"/><rect x="304" y="407" width="1" height="3" fill="#ffcc00"/><rect x="309" y="407" width="1" height="3" fill="#ffcc00"/><rect x="319" y="408" width="1" height="2" fill="#ffcc00"/><rect x="326" y="407" width="1" height="3" fill="#ffcc00"/><rect x="345" y="408" width="1" height="2" fill="#ffcc00"/><rect x="349" y="407" width="1" height="3" fill="#ffcc00"/><rect x="352" y="407" width="1" height="3" fill="#ffcc00"/><rect x="357" y="409" width="1" height="1" fill="#ffcc00"/><rect x="374" y="407" width="1" height="3" fill="#ffcc00"/><rect x="401" y="409" width="1" height="1" fill="#ffcc00"/><rect x="427" y="407" width="1" height="3" fill="#ffcc00"/><rect x="433" y="409" width="1" height="1" fill="#ffcc00"/><rect x="464" y="409" width="1" height="1" fill="#ffcc00"/><rect x="467" y="407" width="1" height="3" fill="#ffcc00"/><rect x="469" y="408" width="1" height="2" fill="#ffcc00"/><rect x="485" y="408" width="1" height="2" fill="#ffcc00"/><rect x="497" y="408" width="1" height="2" fill="#ffcc00"/><rect x="499" y="407" width="1" height="3" fill="#ffcc00"/><rect x="503" y="407" width="1" height="3" fill="#ffcc00"/><rect x="514" y="408" width="1" height="2" fill="#ffcc00"/><rect x="529" y="407" width="1" height="3" fill="#ffcc00"/><rect x="550" y="408" width="1" height="2" fill="#ffcc00"/><rect x="553" y="408" width="1" height="2" fill="#ffcc00"/><rect x="579" y="407" width="1" height="3" fill="#ffcc00"/><rect x="587" y="408" width="1" height="2" fill="#ffcc00"/><rect x="596" y="409" width="1" height="1" fill="#ffcc00"/><rect x="253" y="407" width="1" height="10" fill="#ffcc00"/><rect x="254" y="407" width="1" height="7" fill="#ffcc00"/><rect x="283" y="408" width="1" height="9" fill="#ffcc00"/><rect x="284" y="405" width="1" height="12" fill="#ffcc00"/><rect x="285" y="407" width="1" height="10" fill="#ffcc00"/><rect x="399" y="402" width="1" height="14" fill="#ffcc00"/><rect x="604" y="316" width="1" height="96" fill="#ffcc00"/><rect x="605" y="316" width="1" height="44" fill="#ffcc00"/><rect x="606" y="322" width="1" height="30" fill="#ffcc00"/><rect x="607" y="328" width="1" height="20" fill="#ffcc00"/><rect x="608" y="330" width="1" height="15" fill="#ffcc00"/><rect x="609" y="332" width="1" height="11" fill="#ffcc00"/><rect x="610" y="333" width="1" height="9" fill="#ffcc00"/><rect x="611" y="334" width="1" height="7" fill="#ffcc00"/><rect x="612" y="335" width="54" height="5" fill="#ffcc00"/><rect x="640" y="340" width="1" height="1" fill="#ffcc00"/><rect x="39" y="40" width="1" height="2" fill="#8c8c8c"/><rect x="39" y="517" width="1" height="2" fill="#8c8c8c"/><rect x="54" y="40" width="1" height="2" fill="#8c8c8c"/><rect x="54" y="517" width="1" height="2" fill="#8c8c8c"/><rect x="69" y="40" width="1" height="2" fill="#8c8c8c"/><rect x="69" y="517" width="1" height="2" fill="#8c8c8c"/><rect x="84" y="40" width="1" height="2" fill="#8c8c8c"/><rect x="84" y="517" width="1" height="2" fill="#8c8c8c"/><rect x="99" y="40" width="1" height="2" fill="#8c8c8c"/><rect x="99" y="517" width="1" height="2" fill="#8c8c8c"/><rect x="114" y="40" width="1" height="2" fill="#8c8c8c"/><rect x="114" y="517" width="1" height="2" fill="#8c8c8c"/><rect x="129" y="40" width="1" height="2" fill="#8c8c8c"/><rect x="129" y="517" width="1" height="2" fill="#8c8c8c"/><rect x="144" y="40" width="1" height="2" fill="#8c8c8c"/><rect x="144" y="517" width="1" height="2" fill="#8c8c8c"/><rect x="159" y="40" width="1" height="2" fill="#8c8c8c"/><rect x="159" y="517" width="1" height="2" fill="#8c8c8c"/><rect x="174" y="40" width="1" height="2" fill="#8c8c8c"/><rect x="174" y="517" width="1" height="2" fill="#8c8c8c"/><rect x="189" y="40" width="1" height="2" fill="#8c8c8c"/><rect x="189" y="517" width="1" height="2" fill="#8c8c8c"/><rect x="204" y="40" width="1" height="2" fill="#8c8c8c"/><rect x="204" y="517" width="1" height="2" fill="#8c8c8c"/><rect x="219" y="40" width="1" height="2" fill="#8c8c8c"/><rect x="219" y="517" width="1" height="2" fill="#8c8c8c"/><rect x="234" y="40" width="1" height="2" fill="#8c8c8c"/><rect x="234" y="517" width="1" height="2" fill="#8c8c8c"/><rect x="249" y="40" width="1" height="2" fill="#8c8c8c"/><rect x="249" y="517" width="1" height="2" fill="#8c8c8c"/><rect x="264" y="40" width="1" height="2" fill="#8c8c8c"/><rect x="264" y="517" width="1" height="2" fill="#8c8c8c"/><rect x="279" y="40" width="1" height="2" fill="#8c8c8c"/><rect x="279" y="517" width="1" height="2" fill="#8c8c8c"/><rect x="294" y="40" width="1" height="2" fill="#8c8c8c"/><rect x="294" y="517" width="1" height="2" fill="#8c8c8c"/><rect x="309" y="40" width="1" height="2" fill="#8c8c8c"/><rect x="309" y="517" width="1" height="2" fill="#8c8c8c"/><rect x="324" y="40" width="1" height="2" fill="#8c8c8c"/><rect x="324" y="517" width="1" height="2" fill="#8c8c8c"/><rect x="339" y="40" width="1" height="2" fill="#8c8c8c"/><rect x="339" y="517" width="1" height="2" fill="#8c8c8c"/><rect x="354" y="40" width="1" height="2" fill="#8c8c8c"/><rect x="354" y="517" width="1" height="2" fill="#8c8c8c"/><rect x="369" y="40" width="1" height="2" fill="#8c8c8c"/><rect x="369" y="517" width="1" height="2" fill="#8c8c8c"/><rect x="384" y="40" width="1" height="2" fill="#8c8c8c"/><rect x="384" y="517" width="1" height="2" fill="#8c8c8c"/><rect x="399" y="40" width="1" height="2" fill="#8c8c8c"/><rect x="399" y="517" width="1" height="2" fill="#8c8c8c"/><rect x="414" y="40" width="1" height="2" fill="#8c8c8c"/><rect x="414" y="517" width="1" height="2" fill="#8c8c8c"/><rect x="429" y="40" width="1" height="2" fill="#8c8c8c"/><rect x="429" y="517" width="1" height="2" fill="#8c8c8c"/><rect x="444" y="40" width="1" height="2" fill="#8c8c8c"/><rect x="444" y="517" width="1" height="2" fill="#8c8c8c"/><rect x="459" y="40" width="1" height="2" fill="#8c8c8c"/><rect x="459" y="517" width="1" height="2" fill="#8c8c8c"/><rect x="474" y="40" width="1" height="2" fill="#8c8c8c"/><rect x="474" y="517" width="1" height="2" fill="#8c8c8c"/><rect x="489" y="40" width="1" height="2" fill="#8c8c8c"/><rect x="489" y="517" width="1" height="2" fill="#8c8c8c"/><rect x="504" y="40" width="1" height="2" fill="#8c8c8c"/><rect x="504" y="517" width="1" height="2" fill="#8c8c8c"/><rect x="519" y="40" width="1" height="2" fill="#8c8c8c"/><rect x="519" y="517" width="1" height="2" fill="#8c8c8c"/><rect x="534" y="40" width="1" height="2" fill="#8c8c8c"/><rect x="534" y="517" width="1" height="2" fill="#8c8c8c"/><rect x="549" y="40" width="1" height="2" fill="#8c8c8c"/><rect x="549" y="517" width="1" height="2" fill="#8c8c8c"/><rect x="564" y="40" width="1" height="2" fill="#8c8c8c"/><rect x="564" y="517" width="1" height="2" fill="#8c8c8c"/><rect x="579" y="40" width="1" height="2" fill="#8c8c8c"/><rect x="579" y="517" width="1" height="2" fill="#8c8c8c"/><rect x="594" y="40" width="1" height="2" fill="#8c8c8c"/><rect x="594" y="517" width="1" height="2" fill="#8c8c8c"/><rect x="609" y="40" width="1" height="2" fill="#8c8c8c"/><rect x="609" y="517" width="1" height="2" fill="#8c8c8c"/><rect x="624" y="40" width="1" height="2" fill="#8c8c8c"/><rect x="624" y="517" width="1" height="2" fill="#8c8c8c"/><rect x="639" y="40" width="1" height="2" fill="#8c8c8c"/><rect x="639" y="517" width="1" height="2" fill="#8c8c8c"/><rect x="654" y="40" width="1" height="2" fill="#8c8c8c"/><rect x="654" y="517" width="1" height="2" fill="#8c8c8c"/><rect x="669" y="40" width="1" height="2" fill="#8c8c8c"/><rect x="669" y="517" width="1" height="2" fill="#8c8c8c"/><rect x="684" y="40" width="1" height="2" fill="#8c8c8c"/><rect x="684" y="517" width="1" height="2" fill="#8c8c8c"/><rect x="699" y="40" width="1" height="2" fill="#8c8c8c"/><rect x="699" y="517" width="1" height="2" fill="#8c8c8c"/><rect x="714" y="40" width="1" height="2" fill="#8c8c8c"/><rect x="714" y="517" width="1" height="2" fill="#8c8c8c"/><rect x="729" y="40" width="1" height="2" fill="#8c8c8c"/><rect x="729" y="517" width="1" height="2" fill="#8c8c8c"/><rect x="744" y="40" width="1" height="2" fill="#8c8c8c"/><rect x="744" y="517" width="1" height="2" fill="#8c8c8c"/><rect x="759" y="40" width="1" height="2" fill="#8c8c8c"/><rect x="759" y="517" width="1" height="2" fill="#8c8c8c"/><rect x="25" y="51" width="2" height="1" fill="#8c8c8c"/><rect x="772" y="51" width="2" height="1" fill="#8c8c8c"/><rect x="25" y="63" width="2" height="1" fill="#8c8c8c"/><rect x="772" y="63" width="2" height="1" fill="#8c8c8c"/><rect x="25" y="75" width="2" height="1" fill="#8c8c8c"/><rect x="772" y="75" width="2" height="1" fill="#8c8c8c"/><rect x="25" y="87" width="2" height="1" fill="#8c8c8c"/><rect x="772" y="87" width="2" height="1" fill="#8c8c8c"/><rect x="25" y="99" width="2" height="1" fill="#8c8c8c"/><rect x="772" y="99" width="2" height="1" fill="#8c8c8c"/><rect x="25" y="111" width="2" height="1" fill="#8c8c8c"/><rect x="772" y="111" width="2" height="1" fill="#8c8c8c"/><rect x="25" y="123" width="2" height="1" fill="#8c8c8c"/><rect x="772" y="123" width="2" height="1" fill="#8c8c8c"/><rect x="25" y="135" width="2" height="1" fill="#8c8c8c"/><rect x="772" y="135" width="2" height="1" fill="#8c8c8c"/><rect x="25" y="147" width="2" height="1" fill="#8c8c8c"/><rect x="772" y="147" width="2" height="1" fill="#8c8c8c"/><rect x="25" y="159" width="2" height="1" fill="#8c8c8c"/><rect x="772" y="159" width="2" height="1" fill="#8c8c8c"/><rect x="25" y="171" width="2" height="1" fill="#8c8c8c"/><rect x="772" y="171" width="2" height="1" fill="#8c8c8c"/><rect x="25" y="183" width="2" height="1" fill="#8c8c8c"/><rect x="772" y="183" width="2" height="1" fill="#8c8c8c"/><rect x="25" y="195" width="2" height="1" fill="#8c8c8c"/><rect x="772" y="195" width="2" height="1" fill="#8c8c8c"/><rect x="25" y="207" width="2" height="1" fill="#8c8c8c"/><rect x="772" y="207" width="2" height="1" fill="#8c8c8c"/><rect x="25" y="219" width="2" height="1" fill="#8c8c8c"/><rect x="772" y="219" width="2" height="1" fill="#8c8c8c"/><rect x="25" y="231" width="2" height="1" fill="#8c8c8c"/><rect x="772" y="231" width="2" height="1" fill="#8c8c8c"/><rect x="25" y="243" width="2" height="1" fill="#8c8c8c"/><rect x="772" y="243" width="2" height="1" fill="#8c8c8c"/><rect x="25" y="255" width="2" height="1" fill="#8c8c8c"/><rect x="772" y="255" width="2" height="1" fill="#8c8c8c"/><rect x="25" y="267" width="2" height="1" fill="#8c8c8c"/><rect x="772" y="267" width="2" height="1" fill="#8c8c8c"/><rect x="25" y="279" width="2" height="1" fill="#8c8c8c"/><rect x="772" y="279" width="2" height="1" fill="#8c8c8c"/><rect x="25" y="291" width="2" height="1" fill="#8c8c8c"/><rect x="772" y="291" width="2" height="1" fill="#8c8c8c"/><rect x="25" y="303" width="2" height="1" fill="#8c8c8c"/><rect x="772" y="303" width="2" height="1" fill="#8c8c8c"/><rect x="25" y="315" width="2" height="1" fill="#8c8c8c"/><rect x="772" y="315" width="2" height="1" fill="#8c8c8c"/><rect x="25" y="327" width="2" height="1" fill="#8c8c8c"/><rect x="772" y="327" width="2" height="1" fill="#8c8c8c"/><rect x="25" y="339" width="2" height="1" fill="#8c8c8c"/><rect x="772" y="339" width="2" height="1" fill="#8c8c8c"/><rect x="25" y="351" width="2" height="1" fill="#8c8c8c"/><rect x="772" y="351" width="2" height="1" fill="#8c8c8c"/><rect x="25" y="363" width="2" height="1" fill="#8c8c8c"/><rect x="772" y="363" width="2" height="1" fill="#8c8c8c"/><rect x="25" y="375" width="2" height="1" fill="#8c8c8c"/><rect x="772" y="375" width="2" height="1" fill="#8c8c8c"/><rect x="25" y="387" width="2" height="1" fill="#8c8c8c"/><rect x="772" y="387" width="2" height="1" fill="#8c8c8c"/><rect x="25" y="399" width="2" height="1" fill="#8c8c8c"/><rect x="772" y="399" width="2" height="1" fill="#8c8c8c"/><rect x="25" y="411" width="2" height="1" fill="#8c8c8c"/><rect x="772" y="411" width="2" height="1" fill="#8c8c8c"/><rect x="25" y="423" width="2" height="1" fill="#8c8c8c"/><rect x="772" y="423" width="2" height="1" fill="#8c8c8c"/><rect x="25" y="435" width="2" height="1" fill="#8c8c8c"/><rect x="772" y="435" width="2" height="1" fill="#8c8c8c"/><rect x="25" y="447" width="2" height="1" fill="#8c8c8c"/><rect x="772" y="447" width="2" height="1" fill="#8c8c8c"/><rect x="25" y="459" width="2" height="1" fill="#8c8c8c"/><rect x="772" y="459" width="2" height="1" fill="#8c8c8c"/><rect x="25" y="471" width="2" height="1" fill="#8c8c8c"/><rect x="772" y="471" width="2" height="1" fill="#8c8c8c"/><rect x="25" y="483" width="2" height="1" fill="#8c8c8c"/><rect x="772" y="483" width="2" height="1" fill="#8c8c8c"/><rect x="25" y="495" width="2" height="1" fill="#8c8c8c"/><rect x="772" y="495" width="2" height="1" fill="#8c8c8c"/><rect x="25" y="507" width="2" height="1" fill="#8c8c8c"/><rect x="772" y="507" width="2" height="1" fill="#8c8c8c"/><rect x="99" y="51" width="1" height="1" fill="#8c8c8c"/><rect x="99" y="63" width="1" height="1" fill="#8c8c8c"/><rect x="99" y="75" width="1" height="1" fill="#8c8c8c"/><rect x="99" y="87" width="1" height="1" fill="#8c8c8c"/><rect x="99" y="99" width="1" height="1" fill="#8c8c8c"/><rect x="99" y="111" width="1" height="1" fill="#8c8c8c"/><rect x="99" y="123" width="1" height="1" fill="#8c8c8c"/><rect x="99" y="135" width="1" height="1" fill="#8c8c8c"/><rect x="99" y="147" width="1" height="1" fill="#8c8c8c"/><rect x="99" y="159" width="1" height="1" fill="#8c8c8c"/><rect x="99" y="171" width="1" height="1" fill="#8c8c8c"/><rect x="99" y="183" width="1" height="1" fill="#8c8c8c"/><rect x="99" y="195" width="1" height="1" fill="#8c8c8c"/><rect x="99" y="207" width="1" height="1" fill="#8c8c8c"/><rect x="99" y="219" width="1" height="1" fill="#8c8c8c"/><rect x="99" y="231" width="1" height="1" fill="#8c8c8c"/><rect x="99" y="243" width="1" height="1" fill="#8c8c8c"/><rect x="99" y="255" width="1" height="1" fill="#8c8c8c"/><rect x="99" y="267" width="1" height="1" fill="#8c8c8c"/><rect x="99" y="279" width="1" height="1" fill="#8c8c8c"/><rect x="99" y="291" width="1" height="1" fill="#8c8c8c"/><rect x="99" y="303" width="1" height="1" fill="#8c8c8c"/><rect x="99" y="315" width="1" height="1" fill="#8c8c8c"/><rect x="99" y="327" width="1" height="1" fill="#8c8c8c"/><rect x="99" y="339" width="1" height="1" fill="#8c8c8c"/><rect x="99" y="351" width="1" height="1" fill="#8c8c8c"/><rect x="99" y="363" width="1" height="1" fill="#8c8c8c"/><rect x="99" y="375" width="1" height="1" fill="#8c8c8c"/><rect x="99" y="387" width="1" height="1" fill="#8c8c8c"/><rect x="99" y="399" width="1" height="1" fill="#8c8c8c"/><rect x="99" y="411" width="1" height="1" fill="#8c8c8c"/><rect x="99" y="423" width="1" height="1" fill="#8c8c8c"/><rect x="99" y="435" width="1" height="1" fill="#8c8c8c"/><rect x="99" y="447" width="1" height="1" fill="#8c8c8c"/><rect x="99" y="459" width="1" height="1" fill="#8c8c8c"/><rect x="99" y="471" width="1" height="1" fill="#8c8c8c"/><rect x="99" y="483" width="1" height="1" fill="#8c8c8c"/><rect x="99" y="495" width="1" height="1" fill="#8c8c8c"/><rect x="99" y="507" width="1" height="1" fill="#8c8c8c"/><rect x="174" y="51" width="1" height="1" fill="#8c8c8c"/><rect x="174" y="63" width="1" height="1" fill="#8c8c8c"/><rect x="174" y="75" width="1" height="1" fill="#8c8c8c"/><rect x="174" y="87" width="1" height="1" fill="#8c8c8c"/><rect x="174" y="99" width="1" height="1" fill="#8c8c8c"/><rect x="174" y="111" width="1" height="1" fill="#8c8c8c"/><rect x="174" y="123" width="1" height="1" fill="#8c8c8c"/><rect x="174" y="135" width="1" height="1" fill="#8c8c8c"/><rect x="174" y="147" width="1" height="1" fill="#8c8c8c"/><rect x="174" y="159" width="1" height="1" fill="#8c8c8c"/><rect x="174" y="171" width="1" height="1" fill="#8c8c8c"/><rect x="174" y="183" width="1" height="1" fill="#8c8c8c"/><rect x="174" y="195" width="1" height="1" fill="#8c8c8c"/><rect x="174" y="207" width="1" height="1" fill="#8c8c8c"/><rect x="174" y="219" width="1" height="1" fill="#8c8c8c"/><rect x="174" y="231" width="1" height="1" fill="#8c8c8c"/><rect x="174" y="243" width="1" height="1" fill="#8c8c8c"/><rect x="174" y="255" width="1" height="1" fill="#8c8c8c"/><rect x="174" y="267" width="1" height="1" fill="#8c8c8c"/><rect x="174" y="279" width="1" height="1" fill="#8c8c8c"/><rect x="174" y="291" width="1" height="1" fill="#8c8c8c"/><rect x="174" y="303" width="1" height="1" fill="#8c8c8c"/><rect x="174" y="315" width="1" height="1" fill="#8c8c8c"/><rect x="174" y="327" width="1" height="1" fill="#8c8c8c"/><rect x="174" y="339" width="1" height="1" fill="#8c8c8c"/><rect x="174" y="351" width="1" height="1" fill="#8c8c8c"/><rect x="174" y="363" width="1" height="1" fill="#8c8c8c"/><rect x="174" y="375" width="1" height="1" fill="#8c8c8c"/><rect x="174" y="387" width="1" height="1" fill="#8c8c8c"/><rect x="174" y="399" width="1" height="1" fill="#8c8c8c"/><rect x="174" y="411" width="1" height="1" fill="#8c8c8c"/><rect x="174" y="423" width="1" height="1" fill="#8c8c8c"/><rect x="174" y="435" width="1" height="1" fill="#8c8c8c"/><rect x="174" y="447" width="1" height="1" fill="#8c8c8c"/><rect x="174" y="459" width="1" height="1" fill="#8c8c8c"/><rect x="174" y="471" width="1" height="1" fill="#8c8c8c"/><rect x="174" y="483" width="1" height="1" fill="#8c8c8c"/><rect x="174" y="495" width="1" height="1" fill="#8c8c8c"/><rect x="174" y="507" width="1" height="1" fill="#8c8c8c"/><rect x="249" y="51" width="1" height="1" fill="#8c8c8c"/><rect x="249" y="63" width="1" height="1" fill="#8c8c8c"/><rect x="249" y="75" width="1" height="1" fill="#8c8c8c"/><rect x="249" y="87" width="1" height="1" fill="#8c8c8c"/><rect x="249" y="99" width="1" height="1" fill="#8c8c8c"/><rect x="249" y="111" width="1" height="1" fill="#8c8c8c"/><rect x="249" y="123" width="1" height="1" fill="#8c8c8c"/><rect x="249" y="135" width="1" height="1" fill="#8c8c8c"/><rect x="249" y="147" width="1" height="1" fill="#8c8c8c"/><rect x="249" y="159" width="1" height="1" fill="#8c8c8c"/><rect x="249" y="171" width="1" height="1" fill="#8c8c8c"/><rect x="249" y="183" width="1" height="1" fill="#8c8c8c"/><rect x="249" y="195" width="1" height="1" fill="#8c8c8c"/><rect x="249" y="207" width="1" height="1" fill="#8c8c8c"/><rect x="249" y="219" width="1" height="1" fill="#8c8c8c"/><rect x="249" y="231" width="1" height="1" fill="#8c8c8c"/><rect x="249" y="243" width="1" height="1" fill="#8c8c8c"/><rect x="249" y="255" width="1" height="1" fill="#8c8c8c"/><rect x="249" y="267" width="1" height="1" fill="#8c8c8c"/><rect x="249" y="279" width="1" height="1" fill="#8c8c8c"/><rect x="249" y="291" width="1" height="1" fill="#8c8c8c"/><rect x="249" y="303" width="1" height="1" fill="#8c8c8c"/><rect x="249" y="315" width="1" height="1" fill="#8c8c8c"/><rect x="249" y="327" width="1" height="1" fill="#8c8c8c"/><rect x="249" y="339" width="1" height="1" fill="#8c8c8c"/><rect x="249" y="351" width="1" height="1" fill="#8c8c8c"/><rect x="249" y="363" width="1" height="1" fill="#8c8c8c"/><rect x="249" y="375" width="1" height="1" fill="#8c8c8c"/><rect x="249" y="387" width="1" height="1" fill="#8c8c8c"/><rect x="249" y="399" width="1" height="1" fill="#8c8c8c"/><rect x="249" y="411" width="1" height="1" fill="#8c8c8c"/><rect x="249" y="423" width="1" height="1" fill="#8c8c8c"/><rect x="249" y="435" width="1" height="1" fill="#8c8c8c"/><rect x="249" y="447" width="1" height="1" fill="#8c8c8c"/><rect x="249" y="459" width="1" height="1" fill="#8c8c8c"/><rect x="249" y="471" width="1" height="1" fill="#8c8c8c"/><rect x="249" y="483" width="1" height="1" fill="#8c8c8c"/><rect x="249" y="495" width="1" height="1" fill="#8c8c8c"/><rect x="249" y="507" width="1" height="1" fill="#8c8c8c"/><rect x="324" y="51" width="1" height="1" fill="#8c8c8c"/><rect x="324" y="63" width="1" height="1" fill="#8c8c8c"/><rect x="324" y="75" width="1" height="1" fill="#8c8c8c"/><rect x="324" y="87" width="1" height="1" fill="#8c8c8c"/><rect x="324" y="99" width="1" height="1" fill="#8c8c8c"/><rect x="324" y="111" width="1" height="1" fill="#8c8c8c"/><rect x="324" y="123" width="1" height="1" fill="#8c8c8c"/><rect x="324" y="135" width="1" height="1" fill="#8c8c8c"/><rect x="324" y="147" width="1" height="1" fill="#8c8c8c"/><rect x="324" y="159" width="1" height="1" fill="#8c8c8c"/><rect x="324" y="171" width="1" height="1" fill="#8c8c8c"/><rect x="324" y="183" width="1" height="1" fill="#8c8c8c"/><rect x="324" y="195" width="1" height="1" fill="#8c8c8c"/><rect x="324" y="207" width="1" height="1" fill="#8c8c8c"/><rect x="324" y="219" width="1" height="1" fill="#8c8c8c"/><rect x="324" y="231" width="1" height="1" fill="#8c8c8c"/><rect x="324" y="243" width="1" height="1" fill="#8c8c8c"/><rect x="324" y="255" width="1" height="1" fill="#8c8c8c"/><rect x="324" y="267" width="1" height="1" fill="#8c8c8c"/><rect x="324" y="279" width="1" height="1" fill="#8c8c8c"/><rect x="324" y="291" width="1" height="1" fill="#8c8c8c"/><rect x="324" y="303" width="1" height="1" fill="#8c8c8c"/><rect x="324" y="315" width="1" height="1" fill="#8c8c8c"/><rect x="324" y="327" width="1" height="1" fill="#8c8c8c"/><rect x="324" y="339" width="1" height="1" fill="#8c8c8c"/><rect x="324" y="351" width="1" height="1" fill="#8c8c8c"/><rect x="324" y="363" width="1" height="1" fill="#8c8c8c"/><rect x="324" y="375" width="1" height="1" fill="#8c8c8c"/><rect x="324" y="387" width="1" height="1" fill="#8c8c8c"/><rect x="324" y="399" width="1" height="1" fill="#8c8c8c"/><rect x="324" y="411" width="1" height="1" fill="#8c8c8c"/><rect x="324" y="423" width="1" height="1" fill="#8c8c8c"/><rect x="324" y="435" width="1" height="1" fill="#8c8c8c"/><rect x="324" y="447" width="1" height="1" fill="#8c8c8c"/><rect x="324" y="459" width="1" height="1" fill="#8c8c8c"/><rect x="324" y="471" width="1" height="1" fill="#8c8c8c"/><rect x="324" y="483" width="1" height="1" fill="#8c8c8c"/><rect x="324" y="495" width="1" height="1" fill="#8c8c8c"/><rect x="324" y="507" width="1" height="1" fill="#8c8c8c"/><rect x="474" y="51" width="1" height="1" fill="#8c8c8c"/><rect x="474" y="63" width="1" height="1" fill="#8c8c8c"/><rect x="474" y="75" width="1" height="1" fill="#8c8c8c"/><rect x="474" y="87" width="1" height="1" fill="#8c8c8c"/><rect x="474" y="99" width="1" height="1" fill="#8c8c8c"/><rect x="474" y="111" width="1" height="1" fill="#8c8c8c"/><rect x="474" y="123" width="1" height="1" fill="#8c8c8c"/><rect x="474" y="135" width="1" height="1" fill="#8c8c8c"/><rect x="474" y="147" width="1" height="1" fill="#8c8c8c"/><rect x="474" y="159" width="1" height="1" fill="#8c8c8c"/><rect x="474" y="171" width="1" height="1" fill="#8c8c8c"/><rect x="474" y="183" width="1" height="1" fill="#8c8c8c"/><rect x="474" y="195" width="1" height="1" fill="#8c8c8c"/><rect x="474" y="207" width="1" height="1" fill="#8c8c8c"/><rect x="474" y="219" width="1" height="1" fill="#8c8c8c"/><rect x="474" y="231" width="1" height="1" fill="#8c8c8c"/><rect x="474" y="243" width="1" height="1" fill="#8c8c8c"/><rect x="474" y="255" width="1" height="1" fill="#8c8c8c"/><rect x="474" y="267" width="1" height="1" fill="#8c8c8c"/><rect x="474" y="279" width="1" height="1" fill="#8c8c8c"/><rect x="474" y="291" width="1" height="1" fill="#8c8c8c"/><rect x="474" y="303" width="1" height="1" fill="#8c8c8c"/><rect x="474" y="315" width="1" height="1" fill="#8c8c8c"/><rect x="474" y="327" width="1" height="1" fill="#8c8c8c"/><rect x="474" y="339" width="1" height="1" fill="#8c8c8c"/><rect x="474" y="351" width="1" height="1" fill="#8c8c8c"/><rect x="474" y="363" width="1" height="1" fill="#8c8c8c"/><rect x="474" y="375" width="1" height="1" fill="#8c8c8c"/><rect x="474" y="387" width="1" height="1" fill="#8c8c8c"/><rect x="474" y="399" width="1" height="1" fill="#8c8c8c"/><rect x="474" y="411" width="1" height="1" fill="#8c8c8c"/><rect x="474" y="423" width="1" height="1" fill="#8c8c8c"/><rect x="474" y="435" width="1" height="1" fill="#8c8c8c"/><rect x="474" y="447" width="1" height="1" fill="#8c8c8c"/><rect x="474" y="459" width="1" height="1" fill="#8c8c8c"/><rect x="474" y="471" width="1" height="1" fill="#8c8c8c"/><rect x="474" y="483" width="1" height="1" fill="#8c8c8c"/><rect x="474" y="495" width="1" height="1" fill="#8c8c8c"/><rect x="474" y="507" width="1" height="1" fill="#8c8c8c"/><rect x="549" y="51" width="1" height="1" fill="#8c8c8c"/><rect x="549" y="63" width="1" height="1" fill="#8c8c8c"/><rect x="549" y="75" width="1" height="1" fill="#8c8c8c"/><rect x="549" y="87" width="1" height="1" fill="#8c8c8c"/><rect x="549" y="99" width="1" height="1" fill="#8c8c8c"/><rect x="549" y="111" width="1" height="1" fill="#8c8c8c"/><rect x="549" y="123" width="1" height="1" fill="#8c8c8c"/><rect x="549" y="135" width="1" height="1" fill="#8c8c8c"/><rect x="549" y="147" width="1" height="1" fill="#8c8c8c"/><rect x="549" y="159" width="1" height="1" fill="#8c8c8c"/><rect x="549" y="171" width="1" height="1" fill="#8c8c8c"/><rect x="549" y="183" width="1" height="1" fill="#8c8c8c"/><rect x="549" y="195" width="1" height="1" fill="#8c8c8c"/><rect x="549" y="207" width="1" height="1" fill="#8c8c8c"/><rect x="549" y="219" width="1" height="1" fill="#8c8c8c"/><rect x="549" y="231" width="1" height="1" fill="#8c8c8c"/><rect x="549" y="243" width="1" height="1" fill="#8c8c8c"/><rect x="549" y="255" width="1" height="1" fill="#8c8c8c"/><rect x="549" y="267" width="1" height="1" fill="#8c8c8c"/><rect x="549" y="279" width="1" height="1" fill="#8c8c8c"/><rect x="549" y="291" width="1" height="1" fill="#8c8c8c"/><rect x="549" y="303" width="1" height="1" fill="#8c8c8c"/><rect x="549" y="315" width="1" height="1" fill="#8c8c8c"/><rect x="549" y="327" width="1" height="1" fill="#8c8c8c"/><rect x="549" y="339" width="1" height="1" fill="#8c8c8c"/><rect x="549" y="351" width="1" height="1" fill="#8c8c8c"/><rect x="549" y="363" width="1" height="1" fill="#8c8c8c"/><rect x="549" y="375" width="1" height="1" fill="#8c8c8c"/><rect x="549" y="387" width="1" height="1" fill="#8c8c8c"/><rect x="549" y="399" width="1" height="1" fill="#8c8c8c"/><rect x="549" y="411" width="1" height="1" fill="#8c8c8c"/><rect x="549" y="423" width="1" height="1" fill="#8c8c8c"/><rect x="549" y="435" width="1" height="1" fill="#8c8c8c"/><rect x="549" y="447" width="1" height="1" fill="#8c8c8c"/><rect x="549" y="459" width="1" height="1" fill="#8c8c8c"/><rect x="549" y="471" width="1" height="1" fill="#8c8c8c"/><rect x="549" y="483" width="1" height="1" fill="#8c8c8c"/><rect x="549" y="495" width="1" height="1" fill="#8c8c8c"/><rect x="549" y="507" width="1" height="1" fill="#8c8c8c"/><rect x="624" y="51" width="1" height="1" fill="#8c8c8c"/><rect x="624" y="63" width="1" height="1" fill="#8c8c8c"/><rect x="624" y="75" width="1" height="1" fill="#8c8c8c"/><rect x="624" y="87" width="1" height="1" fill="#8c8c8c"/><rect x="624" y="99" width="1" height="1" fill="#8c8c8c"/><rect x="624" y="111" width="1" height="1" fill="#8c8c8c"/><rect x="624" y="123" width="1" height="1" fill="#8c8c8c"/><rect x="624" y="135" width="1" height="1" fill="#8c8c8c"/><rect x="624" y="147" width="1" height="1" fill="#8c8c8c"/><rect x="624" y="159" width="1" height="1" fill="#8c8c8c"/><rect x="624" y="171" width="1" height="1" fill="#8c8c8c"/><rect x="624" y="183" width="1" height="1" fill="#8c8c8c"/><rect x="624" y="195" width="1" height="1" fill="#8c8c8c"/><rect x="624" y="207" width="1" height="1" fill="#8c8c8c"/><rect x="624" y="219" width="1" height="1" fill="#8c8c8c"/><rect x="624" y="231" width="1" height="1" fill="#8c8c8c"/><rect x="624" y="243" width="1" height="1" fill="#8c8c8c"/><rect x="624" y="255" width="1" height="1" fill="#8c8c8c"/><rect x="624" y="267" width="1" height="1" fill="#8c8c8c"/><rect x="624" y="279" width="1" height="1" fill="#8c8c8c"/><rect x="624" y="291" width="1" height="1" fill="#8c8c8c"/><rect x="624" y="303" width="1" height="1" fill="#8c8c8c"/><rect x="624" y="315" width="1" height="1" fill="#8c8c8c"/><rect x="624" y="327" width="1" height="1" fill="#8c8c8c"/><rect x="624" y="339" width="1" height="1" fill="#8c8c8c"/><rect x="624" y="351" width="1" height="1" fill="#8c8c8c"/><rect x="624" y="363" width="1" height="1" fill="#8c8c8c"/><rect x="624" y="375" width="1" height="1" fill="#8c8c8c"/><rect x="624" y="387" width="1" height="1" fill="#8c8c8c"/><rect x="624" y="399" width="1" height="1" fill="#8c8c8c"/><rect x="624" y="411" width="1" height="1" fill="#8c8c8c"/><rect x="624" y="423" width="1" height="1" fill="#8c8c8c"/><rect x="624" y="435" width="1" height="1" fill="#8c8c8c"/><rect x="624" y="447" width="1" height="1" fill="#8c8c8c"/><rect x="624" y="459" width="1" height="1" fill="#8c8c8c"/><rect x="624" y="471" width="1" height="1" fill="#8c8c8c"/><rect x="624" y="483" width="1" height="1" fill="#8c8c8c"/><rect x="624" y="495" width="1" height="1" fill="#8c8c8c"/><rect x="624" y="507" width="1" height="1" fill="#8c8c8c"/><rect x="699" y="51" width="1" height="1" fill="#8c8c8c"/><rect x="699" y="63" width="1" height="1" fill="#8c8c8c"/><rect x="699" y="75" width="1" height="1" fill="#8c8c8c"/><rect x="699" y="87" width="1" height="1" fill="#8c8c8c"/><rect x="699" y="99" width="1" height="1" fill="#8c8c8c"/><rect x="699" y="111" width="1" height="1" fill="#8c8c8c"/><rect x="699" y="123" width="1" height="1" fill="#8c8c8c"/><rect x="699" y="135" width="1" height="1" fill="#8c8c8c"/><rect x="699" y="147" width="1" height="1" fill="#8c8c8c"/><rect x="699" y="159" width="1" height="1" fill="#8c8c8c"/><rect x="699" y="171" width="1" height="1" fill="#8c8c8c"/><rect x="699" y="183" width="1" height="1" fill="#8c8c8c"/><rect x="699" y="195" width="1" height="1" fill="#8c8c8c"/><rect x="699" y="207" width="1" height="1" fill="#8c8c8c"/><rect x="699" y="219" width="1" height="1" fill="#8c8c8c"/><rect x="699" y="231" width="1" height="1" fill="#8c8c8c"/><rect x="699" y="243" width="1" height="1" fill="#8c8c8c"/><rect x="699" y="255" width="1" height="1" fill="#8c8c8c"/><rect x="699" y="267" width="1" height="1" fill="#8c8c8c"/><rect x="699" y="279" width="1" height="1" fill="#8c8c8c"/><rect x="699" y="291" width="1" height="1" fill="#8c8c8c"/><rect x="699" y="303" width="1" height="1" fill="#8c8c8c"/><rect x="699" y="315" width="1" height="1" fill="#8c8c8c"/><rect x="699" y="327" width="1" height="1" fill="#8c8c8c"/><rect x="699" y="339" width="1" height="1" fill="#8c8c8c"/><rect x="699" y="351" width="1" height="1" fill="#8c8c8c"/><rect x="699" y="363" width="1" height="1" fill="#8c8c8c"/><rect x="699" y="375" width="1" height="1" fill="#8c8c8c"/><rect x="699" y="387" width="1" height="1" fill="#8c8c8c"/><rect x="699" y="399" width="1" height="1" fill="#8c8c8c"/><rect x="699" y="411" width="1" height="1" fill="#8c8c8c"/><rect x="699" y="423" width="1" height="1" fill="#8c8c8c"/><rect x="699" y="435" width="1" height="1" fill="#8c8c8c"/><rect x="699" y="447" width="1" height="1" fill="#8c8c8c"/><rect x="699" y="459" width="1" height="1" fill="#8c8c8c"/><rect x="699" y="471" width="1" height="1" fill="#8c8c8c"/><rect x="699" y="483" width="1" height="1" fill="#8c8c8c"/><rect x="699" y="495" width="1" height="1" fill="#8c8c8c"/><rect x="699" y="507" width="1" height="1" fill="#8c8c8c"/><rect x="39" y="99" width="1" height="1" fill="#8c8c8c"/><rect x="54" y="99" width="1" height="1" fill="#8c8c8c"/><rect x="69" y="99" width="1" height="1" fill="#8c8c8c"/><rect x="84" y="99" width="1" height="1" fill="#8c8c8c"/><rect x="99" y="99" width="1" height="1" fill="#8c8c8c"/><rect x="114" y="99" width="1" height="1" fill="#8c8c8c"/><rect x="129" y="99" width="1" height="1" fill="#8c8c8c"/><rect x="144" y="99" width="1" height="1" fill="#8c8c8c"/><rect x="159" y="99" width="1" height="1" fill="#8c8c8c"/><rect x="174" y="99" width="1" height="1" fill="#8c8c8c"/><rect x="189" y="99" width="1" height="1" fill="#8c8c8c"/><rect x="204" y="99" width="1" height="1" fill="#8c8c8c"/><rect x="219" y="99" width="1" height="1" fill="#8c8c8c"/><rect x="234" y="99" width="1" height="1" fill="#8c8c8c"/><rect x="249" y="99" width="1" height="1" fill="#8c8c8c"/><rect x="264" y="99" width="1" height="1" fill="#8c8c8c"/><rect x="279" y="99" width="1" height="1" fill="#8c8c8c"/><rect x="294" y="99" width="1" height="1" fill="#8c8c8c"/><rect x="309" y="99" width="1" height="1" fill="#8c8c8c"/><rect x="324" y="99" width="1" height="1" fill="#8c8c8c"/><rect x="339" y="99" width="1" height="1" fill="#8c8c8c"/><rect x="354" y="99" width="1" height="1" fill="#8c8c8c"/><rect x="369" y="99" width="1" height="1" fill="#8c8c8c"/><rect x="384" y="99" width="1" height="1" fill="#8c8c8c"/><rect x="399" y="99" width="1" height="1" fill="#8c8c8c"/><rect x="414" y="99" width="1" height="1" fill="#8c8c8c"/><rect x="429" y="99" width="1" height="1" fill="#8c8c8c"/><rect x="444" y="99" width="1" height="1" fill="#8c8c8c"/><rect x="459" y="99" width="1" height="1" fill="#8c8c8c"/><rect x="474" y="99" width="1" height="1" fill="#8c8c8c"/><rect x="489" y="99" width="1" height="1" fill="#8c8c8c"/><rect x="504" y="99" width="1" height="1" fill="#8c8c8c"/><rect x="519" y="99" width="1" height="1" fill="#8c8c8c"/><rect x="534" y="99" width="1" height="1" fill="#8c8c8c"/><rect x="549" y="99" width="1" height="1" fill="#8c8c8c"/><rect x="564" y="99" width="1" height="1" fill="#8c8c8c"/><rect x="579" y="99" width="1" height="1" fill="#8c8c8c"/><rect x="594" y="99" width="1" height="1" fill="#8c8c8c"/><rect x="609" y="99" width="1" height="1" fill="#8c8c8c"/><rect x="624" y="99" width="1" height="1" fill="#8c8c8c"/><rect x="639" y="99" width="1" height="1" fill="#8c8c8c"/><rect x="654" y="99" width="1" height="1" fill="#8c8c8c"/><rect x="669" y="99" width="1" height="1" fill="#8c8c8c"/><rect x="684" y="99" width="1" height="1" fill="#8c8c8c"/><rect x="699" y="99" width="1" height="1" fill="#8c8c8c"/><rect x="714" y="99" width="1" height="1" fill="#8c8c8c"/><rect x="729" y="99" width="1" height="1" fill="#8c8c8c"/><rect x="744" y="99" width="1" height="1" fill="#8c8c8c"/><rect x="759" y="99" width="1" height="1" fill="#8c8c8c"/><rect x="39" y="159" width="1" height="1" fill="#8c8c8c"/><rect x="54" y="159" width="1" height="1" fill="#8c8c8c"/><rect x="69" y="159" width="1" height="1" fill="#8c8c8c"/><rect x="84" y="159" width="1" height="1" fill="#8c8c8c"/><rect x="99" y="159" width="1" height="1" fill="#8c8c8c"/><rect x="114" y="159" width="1" height="1" fill="#8c8c8c"/><rect x="129" y="159" width="1" height="1" fill="#8c8c8c"/><rect x="144" y="159" width="1" height="1" fill="#8c8c8c"/><rect x="159" y="159" width="1" height="1" fill="#8c8c8c"/><rect x="174" y="159" width="1" height="1" fill="#8c8c8c"/><rect x="189" y="159" width="1" height="1" fill="#8c8c8c"/><rect x="204" y="159" width="1" height="1" fill="#8c8c8c"/><rect x="219" y="159" width="1" height="1" fill="#8c8c8c"/><rect x="234" y="159" width="1" height="1" fill="#8c8c8c"/><rect x="249" y="159" width="1" height="1" fill="#8c8c8c"/><rect x="264" y="159" width="1" height="1" fill="#8c8c8c"/><rect x="279" y="159" width="1" height="1" fill="#8c8c8c"/><rect x="294" y="159" width="1" height="1" fill="#8c8c8c"/><rect x="309" y="159" width="1" height="1" fill="#8c8c8c"/><rect x="324" y="159" width="1" height="1" fill="#8c8c8c"/><rect x="339" y="159" width="1" height="1" fill="#8c8c8c"/><rect x="354" y="159" width="1" height="1" fill="#8c8c8c"/><rect x="369" y="159" width="1" height="1" fill="#8c8c8c"/><rect x="384" y="159" width="1" height="1" fill="#8c8c8c"/><rect x="399" y="159" width="1" height="1" fill="#8c8c8c"/><rect x="414" y="159" width="1" height="1" fill="#8c8c8c"/><rect x="429" y="159" width="1" height="1" fill="#8c8c8c"/><rect x="444" y="159" width="1" height="1" fill="#8c8c8c"/><rect x="459" y="159" width="1" height="1" fill="#8c8c8c"/><rect x="474" y="159" width="1" height="1" fill="#8c8c8c"/><rect x="489" y="159" width="1" height="1" fill="#8c8c8c"/><rect x="504" y="159" width="1" height="1" fill="#8c8c8c"/><rect x="519" y="159" width="1" height="1" fill="#8c8c8c"/><rect x="534" y="159" width="1" height="1" fill="#8c8c8c"/><rect x="549" y="159" width="1" height="1" fill="#8c8c8c"/><rect x="564" y="159" width="1" height="1" fill="#8c8c8c"/><rect x="579" y="159" width="1" height="1" fill="#8c8c8c"/><rect x="594" y="159" width="1" height="1" fill="#8c8c8c"/><rect x="609" y="159" width="1" height="1" fill="#8c8c8c"/><rect x="624" y="159" width="1" height="1" fill="#8c8c8c"/><rect x="639" y="159" width="1" height="1" fill="#8c8c8c"/><rect x="654" y="159" width="1" height="1" fill="#8c8c8c"/><rect x="669" y="159" width="1" height="1" fill="#8c8c8c"/><rect x="684" y="159" width="1" height="1" fill="#8c8c8c"/><rect x="699" y="159" width="1" height="1" fill="#8c8c8c"/><rect x="714" y="159" width="1" height="1" fill="#8c8c8c"/><rect x="729" y="159" width="1" height="1" fill="#8c8c8c"/><rect x="744" y="159" width="1" height="1" fill="#8c8c8c"/><rect x="759" y="159" width="1" height="1" fill="#8c8c8c"/><rect x="39" y="219" width="1" height="1" fill="#8c8c8c"/><rect x="54" y="219" width="1" height="1" fill="#8c8c8c"/><rect x="69" y="219" width="1" height="1" fill="#8c8c8c"/><rect x="84" y="219" width="1" height="1" fill="#8c8c8c"/><rect x="99" y="219" width="1" height="1" fill="#8c8c8c"/><rect x="114" y="219" width="1" height="1" fill="#8c8c8c"/><rect x="129" y="219" width="1" height="1" fill="#8c8c8c"/><rect x="144" y="219" width="1" height="1" fill="#8c8c8c"/><rect x="159" y="219" width="1" height="1" fill="#8c8c8c"/><rect x="174" y="219" width="1" height="1" fill="#8c8c8c"/><rect x="189" y="219" width="1" height="1" fill="#8c8c8c"/><rect x="204" y="219" width="1" height="1" fill="#8c8c8c"/><rect x="219" y="219" width="1" height="1" fill="#8c8c8c"/><rect x="234" y="219" width="1" height="1" fill="#8c8c8c"/><rect x="249" y="219" width="1" height="1" fill="#8c8c8c"/><rect x="264" y="219" width="1" height="1" fill="#8c8c8c"/><rect x="279" y="219" width="1" height="1" fill="#8c8c8c"/><rect x="294" y="219" width="1" height="1" fill="#8c8c8c"/><rect x="309" y="219" width="1" height="1" fill="#8c8c8c"/><rect x="324" y="219" width="1" height="1" fill="#8c8c8c"/><rect x="339" y="219" width="1" height="1" fill="#8c8c8c"/><rect x="354" y="219" width="1" height="1" fill="#8c8c8c"/><rect x="369" y="219" width="1" height="1" fill="#8c8c8c"/><rect x="384" y="219" width="1" height="1" fill="#8c8c8c"/><rect x="399" y="219" width="1" height="1" fill="#8c8c8c"/><rect x="414" y="219" width="1" height="1" fill="#8c8c8c"/><rect x="429" y="219" width="1" height="1" fill="#8c8c8c"/><rect x="444" y="219" width="1" height="1" fill="#8c8c8c"/><rect x="459" y="219" width="1" height="1" fill="#8c8c8c"/><rect x="474" y="219" width="1" height="1" fill="#8c8c8c"/><rect x="489" y="219" width="1" height="1" fill="#8c8c8c"/><rect x="504" y="219" width="1" height="1" fill="#8c8c8c"/><rect x="519" y="219" width="1" height="1" fill="#8c8c8c"/><rect x="534" y="219" width="1" height="1" fill="#8c8c8c"/><rect x="549" y="219" width="1" height="1" fill="#8c8c8c"/><rect x="564" y="219" width="1" height="1" fill="#8c8c8c"/><rect x="579" y="219" width="1" height="1" fill="#8c8c8c"/><rect x="594" y="219" width="1" height="1" fill="#8c8c8c"/><rect x="609" y="219" width="1" height="1" fill="#8c8c8c"/><rect x="624" y="219" width="1" height="1" fill="#8c8c8c"/><rect x="639" y="219" width="1" height="1" fill="#8c8c8c"/><rect x="654" y="219" width="1" height="1" fill="#8c8c8c"/><rect x="669" y="219" width="1" height="1" fill="#8c8c8c"/><rect x="684" y="219" width="1" height="1" fill="#8c8c8c"/><rect x="699" y="219" width="1" height="1" fill="#8c8c8c"/><rect x="714" y="219" width="1" height="1" fill="#8c8c8c"/><rect x="729" y="219" width="1" height="1" fill="#8c8c8c"/><rect x="744" y="219" width="1" height="1" fill="#8c8c8c"/><rect x="759" y="219" width="1" height="1" fill="#8c8c8c"/><rect x="39" y="339" width="1" height="1" fill="#8c8c8c"/><rect x="54" y="339" width="1" height="1" fill="#8c8c8c"/><rect x="69" y="339" width="1" height="1" fill="#8c8c8c"/><rect x="84" y="339" width="1" height="1" fill="#8c8c8c"/><rect x="99" y="339" width="1" height="1" fill="#8c8c8c"/><rect x="114" y="339" width="1" height="1" fill="#8c8c8c"/><rect x="129" y="339" width="1" height="1" fill="#8c8c8c"/><rect x="144" y="339" width="1" height="1" fill="#8c8c8c"/><rect x="159" y="339" width="1" height="1" fill="#8c8c8c"/><rect x="174" y="339" width="1" height="1" fill="#8c8c8c"/><rect x="189" y="339" width="1" height="1" fill="#8c8c8c"/><rect x="204" y="339" width="1" height="1" fill="#8c8c8c"/><rect x="219" y="339" width="1" height="1" fill="#8c8c8c"/><rect x="234" y="339" width="1" height="1" fill="#8c8c8c"/><rect x="249" y="339" width="1" height="1" fill="#8c8c8c"/><rect x="264" y="339" width="1" height="1" fill="#8c8c8c"/><rect x="279" y="339" width="1" height="1" fill="#8c8c8c"/><rect x="294" y="339" width="1" height="1" fill="#8c8c8c"/><rect x="309" y="339" width="1" height="1" fill="#8c8c8c"/><rect x="324" y="339" width="1" height="1" fill="#8c8c8c"/><rect x="339" y="339" width="1" height="1" fill="#8c8c8c"/><rect x="354" y="339" width="1" height="1" fill="#8c8c8c"/><rect x="369" y="339" width="1" height="1" fill="#8c8c8c"/><rect x="384" y="339" width="1" height="1" fill="#8c8c8c"/><rect x="399" y="339" width="1" height="1" fill="#8c8c8c"/><rect x="414" y="339" width="1" height="1" fill="#8c8c8c"/><rect x="429" y="339" width="1" height="1" fill="#8c8c8c"/><rect x="444" y="339" width="1" height="1" fill="#8c8c8c"/><rect x="459" y="339" width="1" height="1" fill="#8c8c8c"/><rect x="474" y="339" width="1" height="1" fill="#8c8c8c"/><rect x="489" y="339" width="1" height="1" fill="#8c8c8c"/><rect x="504" y="339" width="1" height="1" fill="#8c8c8c"/><rect x="519" y="339" width="1" height="1" fill="#8c8c8c"/><rect x="534" y="339" width="1" height="1" fill="#8c8c8c"/><rect x="549" y="339" width="1" height="1" fill="#8c8c8c"/><rect x="564" y="339" width="1" height="1" fill="#8c8c8c"/><rect x="579" y="339" width="1" height="1" fill="#8c8c8c"/><rect x="594" y="339" width="1" height="1" fill="#8c8c8c"/><rect x="609" y="339" width="1" height="1" fill="#8c8c8c"/><rect x="624" y="339" width="1" height="1" fill="#8c8c8c"/><rect x="639" y="339" width="1" height="1" fill="#8c8c8c"/><rect x="654" y="339" width="1" height="1" fill="#8c8c8c"/><rect x="669" y="339" width="1" height="1" fill="#8c8c8c"/><rect x="684" y="339" width="1" height="1" fill="#8c8c8c"/><rect x="699" y="339" width="1" height="1" fill="#8c8c8c"/><rect x="714" y="339" width="1" height="1" fill="#8c8c8c"/><rect x="729" y="339" width="1" height="1" fill="#8c8c8c"/><rect x="744" y="339" width="1" height="1" fill="#8c8c8c"/><rect x="759" y="339" width="1" height="1" fill="#8c8c8c"/><rect x="39" y="399" width="1" height="1" fill="#8c8c8c"/><rect x="54" y="399" width="1" height="1" fill="#8c8c8c"/><rect x="69" y="399" width="1" height="1" fill="#8c8c8c"/><rect x="84" y="399" width="1" height="1" fill="#8c8c8c"/><rect x="99" y="399" width="1" height="1" fill="#8c8c8c"/><rect x="114" y="399" width="1" height="1" fill="#8c8c8c"/><rect x="129" y="399" width="1" height="1" fill="#8c8c8c"/><rect x="144" y="399" width="1" height="1" fill="#8c8c8c"/><rect x="159" y="399" width="1" height="1" fill="#8c8c8c"/><rect x="174" y="399" width="1" height="1" fill="#8c8c8c"/><rect x="189" y="399" width="1" height="1" fill="#8c8c8c"/><rect x="204" y="399" width="1" height="1" fill="#8c8c8c"/><rect x="219" y="399" width="1" height="1" fill="#8c8c8c"/><rect x="234" y="399" width="1" height="1" fill="#8c8c8c"/><rect x="249" y="399" width="1" height="1" fill="#8c8c8c"/><rect x="264" y="399" width="1" height="1" fill="#8c8c8c"/><rect x="279" y="399" width="1" height="1" fill="#8c8c8c"/><rect x="294" y="399" width="1" height="1" fill="#8c8c8c"/><rect x="309" y="399" width="1" height="1" fill="#8c8c8c"/><rect x="324" y="399" width="1" height="1" fill="#8c8c8c"/><rect x="339" y="399" width="1" height="1" fill="#8c8c8c"/><rect x="354" y="399" width="1" height="1" fill="#8c8c8c"/><rect x="369" y="399" width="1" height="1" fill="#8c8c8c"/><rect x="384" y="399" width="1" height="1" fill="#8c8c8c"/><rect x="399" y="399" width="1" height="1" fill="#8c8c8c"/><rect x="414" y="399" width="1" height="1" fill="#8c8c8c"/><rect x="429" y="399" width="1" height="1" fill="#8c8c8c"/><rect x="444" y="399" width="1" height="1" fill="#8c8c8c"/><rect x="459" y="399" width="1" height="1" fill="#8c8c8c"/><rect x="474" y="399" width="1" height="1" fill="#8c8c8c"/><rect x="489" y="399" width="1" height="1" fill="#8c8c8c"/><rect x="504" y="399" width="1" height="1" fill="#8c8c8c"/><rect x="519" y="399" width="1" height="1" fill="#8c8c8c"/><rect x="534" y="399" width="1" height="1" fill="#8c8c8c"/><rect x="549" y="399" width="1" height="1" fill="#8c8c8c"/><rect x="564" y="399" width="1" height="1" fill="#8c8c8c"/><rect x="579" y="399" width="1" height="1" fill="#8c8c8c"/><rect x="594" y="399" width="1" height="1" fill="#8c8c8c"/><rect x="609" y="399" width="1" height="1" fill="#8c8c8c"/><rect x="624" y="399" width="1" height="1" fill="#8c8c8c"/><rect x="639" y="399" width="1" height="1" fill="#8c8c8c"/><rect x="654" y="399" width="1" height="1" fill="#8c8c8c"/><rect x="669" y="399" width="1" height="1" fill="#8c8c8c"/><rect x="684" y="399" width="1" height="1" fill="#8c8c8c"/><rect x="699" y="399" width="1" height="1" fill="#8c8c8c"/><rect x="714" y="399" width="1" height="1" fill="#8c8c8c"/><rect x="729" y="399" width="1" height="1" fill="#8c8c8c"/><rect x="744" y="399" width="1" height="1" fill="#8c8c8c"/><rect x="759" y="399" width="1" height="1" fill="#8c8c8c"/><rect x="39" y="459" width="1" height="1" fill="#8c8c8c"/><rect x="54" y="459" width="1" height="1" fill="#8c8c8c"/><rect x="69" y="459" width="1" height="1" fill="#8c8c8c"/><rect x="84" y="459" width="1" height="1" fill="#8c8c8c"/><rect x="99" y="459" width="1" height="1" fill="#8c8c8c"/><rect x="114" y="459" width="1" height="1" fill="#8c8c8c"/><rect x="129" y="459" width="1" height="1" fill="#8c8c8c"/><rect x="144" y="459" width="1" height="1" fill="#8c8c8c"/><rect x="159" y="459" width="1" height="1" fill="#8c8c8c"/><rect x="174" y="459" width="1" height="1" fill="#8c8c8c"/><rect x="189" y="459" width="1" height="1" fill="#8c8c8c"/><rect x="204" y="459" width="1" height="1" fill="#8c8c8c"/><rect x="219" y="459" width="1" height="1" fill="#8c8c8c"/><rect x="234" y="459" width="1" height="1" fill="#8c8c8c"/><rect x="249" y="459" width="1" height="1" fill="#8c8c8c"/><rect x="264" y="459" width="1" height="1" fill="#8c8c8c"/><rect x="279" y="459" width="1" height="1" fill="#8c8c8c"/><rect x="294" y="459" width="1" height="1" fill="#8c8c8c"/><rect x="309" y="459" width="1" height="1" fill="#8c8c8c"/><rect x="324" y="459" width="1" height="1" fill="#8c8c8c"/><rect x="339" y="459" width="1" height="1" fill="#8c8c8c"/><rect x="354" y="459" width="1" height="1" fill="#8c8c8c"/><rect x="369" y="459" width="1" height="1" fill="#8c8c8c"/><rect x="384" y="459" width="1" height="1" fill="#8c8c8c"/><rect x="399" y="459" width="1" height="1" fill="#8c8c8c"/><rect x="414" y="459" width="1" height="1" fill="#8c8c8c"/><rect x="429" y="459" width="1" height="1" fill="#8c8c8c"/><rect x="444" y="459" width="1" height="1" fill="#8c8c8c"/><rect x="459" y="459" width="1" height="1" fill="#8c8c8c"/><rect x="474" y="459" width="1" height="1" fill="#8c8c8c"/><rect x="489" y="459" width="1" height="1" fill="#8c8c8c"/><rect x="504" y="459" width="1" height="1" fill="#8c8c8c"/><rect x="519" y="459" width="1" height="1" fill="#8c8c8c"/><rect x="534" y="459" width="1" height="1" fill="#8c8c8c"/><rect x="549" y="459" width="1" height="1" fill="#8c8c8c"/><rect x="564" y="459" width="1" height="1" fill="#8c8c8c"/><rect x="579" y="459" width="1" height="1" fill="#8c8c8c"/><rect x="594" y="459" width="1" height="1" fill="#8c8c8c"/><rect x="609" y="459" width="1" height="1" fill="#8c8c8c"/><rect x="624" y="459" width="1" height="1" fill="#8c8c8c"/><rect x="639" y="459" width="1" height="1" fill="#8c8c8c"/><rect x="654" y="459" width="1" height="1" fill="#8c8c8c"/><rect x="669" y="459" width="1" height="1" fill="#8c8c8c"/><rect x="684" y="459" width="1" height="1" fill="#8c8c8c"/><rect x="699" y="459" width="1" height="1" fill="#8c8c8c"/><rect x="714" y="459" width="1" height="1" fill="#8c8c8c"/><rect x="729" y="459" width="1" height="1" fill="#8c8c8c"/><rect x="744" y="459" width="1" height="1" fill="#8c8c8c"/><rect x="759" y="459" width="1" height="1" fill="#8c8c8c"/><rect x="398" y="51" width="3" height="1" fill="#8c8c8c"/><rect x="398" y="63" width="3" height="1" fill="#8c8c8c"/><rect x="398" y="75" width="3" height="1" fill="#8c8c8c"/><rect x="398" y="87" width="3" height="1" fill="#8c8c8c"/><rect x="398" y="99" width="3" height="1" fill="#8c8c8c"/><rect x="398" y="111" width="3" height="1" fill="#8c8c8c"/><rect x="398" y="123" width="3" height="1" fill="#8c8c8c"/><rect x="398" y="135" width="3" height="1" fill="#8c8c8c"/><rect x="398" y="147" width="3" height="1" fill="#8c8c8c"/><rect x="398" y="159" width="3" height="1" fill="#8c8c8c"/><rect x="398" y="171" width="3" height="1" fill="#8c8c8c"/><rect x="398" y="183" width="3" height="1" fill="#8c8c8c"/><rect x="398" y="195" width="3" height="1" fill="#8c8c8c"/><rect x="398" y="207" width="3" height="1" fill="#8c8c8c"/><rect x="398" y="219" width="3" height="1" fill="#8c8c8c"/><rect x="398" y="231" width="3" height="1" fill="#8c8c8c"/><rect x="398" y="243" width="3" height="1" fill="#8c8c8c"/><rect x="398" y="255" width="3" height="1" fill="#8c8c8c"/><rect x="398" y="267" width="3" height="1" fill="#8c8c8c"/><rect x="398" y="279" width="3" height="1" fill="#8c8c8c"/><rect x="398" y="291" width="3" height="1" fill="#8c8c8c"/><rect x="398" y="303" width="3" height="1" fill="#8c8c8c"/><rect x="398" y="315" width="3" height="1" fill="#8c8c8c"/><rect x="398" y="327" width="3" height="1" fill="#8c8c8c"/><rect x="398" y="339" width="3" height="1" fill="#8c8c8c"/><rect x="398" y="351" width="3" height="1" fill="#8c8c8c"/><rect x="398" y="363" width="3" height="1" fill="#8c8c8c"/><rect x="398" y="375" width="3" height="1" fill="#8c8c8c"/><rect x="398" y="387" width="3" height="1" fill="#8c8c8c"/><rect x="398" y="399" width="3" height="1" fill="#8c8c8c"/><rect x="398" y="411" width="3" height="1" fill="#8c8c8c"/><rect x="398" y="423" width="3" height="1" fill="#8c8c8c"/><rect x="398" y="435" width="3" height="1" fill="#8c8c8c"/><rect x="398" y="447" width="3" height="1" fill="#8c8c8c"/><rect x="398" y="459" width="3" height="1" fill="#8c8c8c"/><rect x="398" y="471" width="3" height="1" fill="#8c8c8c"/><rect x="398" y="483" width="3" height="1" fill="#8c8c8c"/><rect x="398" y="495" width="3" height="1" fill="#8c8c8c"/><rect x="398" y="507" width="3" height="1" fill="#8c8c8c"/><rect x="39" y="278" width="1" height="3" fill="#8c8c8c"/><rect x="54" y="278" width="1" height="3" fill="#8c8c8c"/><rect x="69" y="278" width="1" height="3" fill="#8c8c8c"/><rect x="84" y="278" width="1" height="3" fill="#8c8c8c"/><rect x="99" y="278" width="1" height="3" fill="#8c8c8c"/><rect x="114" y="278" width="1" height="3" fill="#8c8c8c"/><rect x="129" y="278" width="1" height="3" fill="#8c8c8c"/><rect x="144" y="278" width="1" height="3" fill="#8c8c8c"/><rect x="159" y="278" width="1" height="3" fill="#8c8c8c"/><rect x="174" y="278" width="1" height="3" fill="#8c8c8c"/><rect x="189" y="278" width="1" height="3" fill="#8c8c8c"/><rect x="204" y="278" width="1" height="3" fill="#8c8c8c"/><rect x="219" y="278" width="1" height="3" fill="#8c8c8c"/><rect x="234" y="278" width="1" height="3" fill="#8c8c8c"/><rect x="249" y="278" width="1" height="3" fill="#8c8c8c"/><rect x="264" y="278" width="1" height="3" fill="#8c8c8c"/><rect x="279" y="278" width="1" height="3" fill="#8c8c8c"/><rect x="294" y="278" width="1" height="3" fill="#8c8c8c"/><rect x="309" y="278" width="1" height="3" fill="#8c8c8c"/><rect x="324" y="278" width="1" height="3" fill="#8c8c8c"/><rect x="339" y="278" width="1" height="3" fill="#8c8c8c"/><rect x="354" y="278" width="1" height="3" fill="#8c8c8c"/><rect x="369" y="278" width="1" height="3" fill="#8c8c8c"/><rect x="384" y="278" width="1" height="3" fill="#8c8c8c"/><rect x="399" y="278" width="1" height="3" fill="#8c8c8c"/><rect x="414" y="278" width="1" height="3" fill="#8c8c8c"/><rect x="429" y="278" width="1" height="3" fill="#8c8c8c"/><rect x="444" y="278" width="1" height="3" fill="#8c8c8c"/><rect x="459" y="278" width="1" height="3" fill="#8c8c8c"/><rect x="474" y="278" width="1" height="3" fill="#8c8c8c"/><rect x="489" y="278" width="1" height="3" fill="#8c8c8c"/><rect x="504" y="278" width="1" height="3" fill="#8c8c8c"/><rect x="519" y="278" width="1" height="3" fill="#8c8c8c"/><rect x="534" y="278" width="1" height="3" fill="#8c8c8c"/><rect x="549" y="278" width="1" height="3" fill="#8c8c8c"/><rect x="564" y="278" width="1" height="3" fill="#8c8c8c"/><rect x="579" y="278" width="1" height="3" fill="#8c8c8c"/><rect x="594" y="278" width="1" height="3" fill="#8c8c8c"/><rect x="609" y="278" width="1" height="3" fill="#8c8c8c"/><rect x="624" y="278" width="1" height="3" fill="#8c8c8c"/><rect x="639" y="278" width="1" height="3" fill="#8c8c8c"/><rect x="654" y="278" width="1" height="3" fill="#8c8c8c"/><rect x="669" y="278" width="1" height="3" fill="#8c8c8c"/><rect x="684" y="278" width="1" height="3" fill="#8c8c8c"/><rect x="699" y="278" width="1" height="3" fill="#8c8c8c"/><rect x="714" y="278" width="1" height="3" fill="#8c8c8c"/><rect x="729" y="278" width="1" height="3" fill="#8c8c8c"/><rect x="744" y="278" width="1" height="3" fill="#8c8c8c"/><rect x="759" y="278" width="1" height="3" fill="#8c8c8c"/><rect x="399" y="40" width="1" height="4" fill="#8c8c8c"/></svg><svg width="800" height="600" style="position:absolute;left:0;top:0"><polygon points="24.5,39.5 32,39.5 32,47" fill="#ff3300"/><polyline points="392.5,40.5 399.5,47.5 406.5,40.5" fill="none" stroke="#ff3300" stroke-width="1"/></svg>
<svg width="26" height="16" style="position:absolute;left:0;top:214px"><polygon points="3.5,1.5 19.5,1.5 22.5,7.5 19.5,13.5 3.5,13.5" fill="none" stroke="#9900aa" stroke-width="1"/></svg><div class="mk" style="left:4px;top:214px;color:#9900aa;font-family:"Liberation Serif",serif">B</div><svg width="26" height="16" style="position:absolute;left:0;top:246px"><polygon points="3.5,1.5 19.5,1.5 22.5,7.5 19.5,13.5 3.5,13.5" fill="none" stroke="#ff00ff" stroke-width="1"/></svg><div class="mk" style="left:4px;top:246px;color:#ff00ff;font-family:"Liberation Sans",sans-serif">3</div><svg width="26" height="16" style="position:absolute;left:0;top:327px"><polygon points="3.5,1.5 19.5,1.5 22.5,7.5 19.5,13.5 3.5,13.5" fill="none" stroke="#00f0ff" stroke-width="1"/></svg><div class="mk" style="left:4px;top:327px;color:#00f0ff;font-family:"Liberation Sans",sans-serif">2</div><svg width="26" height="16" style="position:absolute;left:0;top:406px"><polygon points="3.5,1.5 19.5,1.5 22.5,7.5 19.5,13.5 3.5,13.5" fill="#ffcc00" stroke="#000" stroke-width="1"/></svg><div class="mk" style="left:4px;top:406px;color:#000;font-family:"Liberation Sans",sans-serif">1</div>
<div style="position:absolute;left:643px;top:458px;width:30px;height:20px;box-sizing:border-box;border:1px solid #fff;border-radius:7px;background:#000"></div>
<div style="position:absolute;left:645px;top:460px;width:28px;height:16px;box-sizing:border-box;background:#fff;border-radius:6px"></div>
<div class="tx" style="left:652.00px;top:461px;font-size:16px;letter-spacing:0.000px;color:#000;font-weight:normal;">F</div>
<div style="position:absolute;left:666px;top:50px;width:134px;height:426px;box-sizing:border-box;border:1px solid #d96c00;border-radius:6px;background:#3a6ea5"></div><div class="btn" style="left:670px;top:53px;width:126px;height:30px"></div><div class="btn" style="left:670px;top:86px;width:126px;height:75px"></div><div class="btn" style="left:670px;top:164px;width:126px;height:75px"></div><div class="btn" style="left:670px;top:242px;width:126px;height:75px"></div><div class="btn" style="left:670px;top:320px;width:126px;height:75px"></div><div class="btn" style="left:670px;top:398px;width:126px;height:75px"></div><div class="tx" style="left:690.00px;top:61px;font-size:16px;letter-spacing:0.111px;color:#1c1414;font-weight:normal;">Save Image</div><div class="tx" style="left:690.00px;top:105px;font-size:16px;letter-spacing:0.400px;color:#1c1414;font-weight:normal;">File Format</div><div style="position:absolute;left:713px;top:127px;width:42px;height:19px;background:#ccffff;border-radius:4px"></div><div class="tx" style="left:719.00px;top:130px;font-size:16px;letter-spacing:1.500px;color:#1c1414;font-weight:normal;">Png</div><div class="tx" style="left:697.00px;top:184px;font-size:16px;letter-spacing:0.375px;color:#1c1414;font-weight:normal;">Ink Saver</div><div class="tx" style="left:696.00px;top:208px;font-size:16px;letter-spacing:0.000px;color:#1c1414;font-weight:normal;">On</div><div style="position:absolute;left:744px;top:205px;width:32px;height:19px;background:#ccffff;border-radius:4px"></div><div class="tx" style="left:747.00px;top:208px;font-size:16px;letter-spacing:1.500px;color:#1c1414;font-weight:normal;">Off</div><div class="tx" style="left:694.00px;top:351px;font-size:16px;letter-spacing:0.571px;color:#1c1414;font-weight:normal;">Save Now</div><div class="tx" style="left:689.00px;top:428px;font-size:16px;letter-spacing:0.385px;color:#1c1414;font-weight:normal;">File Utilities</div>
<div style="position:absolute;left:24px;top:479px;width:751px;height:39px;box-sizing:border-box;border:1px solid #fff;border-radius:5px;background:#000"></div><div style="position:absolute;left:27px;top:482px;width:14px;height:15px;border-radius:50%;background:#ffcc00"></div><svg width="14" height="15" style="position:absolute;left:27px;top:482px" shape-rendering="crispEdges"><path d="M6,2H8V14H6V5H4V4H5V3H6Z" fill="#000"/></svg><div class="mono" style="left:42px;top:480px;color:#ffcc00">Mean 629mV</div><div style="position:absolute;left:27px;top:500px;width:14px;height:15px;border-radius:50%;background:#00ffff"></div><div class="cn" style="left:27px;top:500px;color:#000">2</div><div class="mono" style="left:42px;top:498px;color:#00ffff">Frequency 128.0kHz</div><div style="position:absolute;left:213px;top:482px;width:14px;height:15px;border-radius:50%;background:#00ffff"></div><div class="cn" style="left:213px;top:482px;color:#000">2</div><div class="mono" style="left:228px;top:480px;color:#00ffff">Mean 1.81V</div><div style="position:absolute;left:213px;top:500px;width:14px;height:15px;border-radius:50%;background:#ffcc00"></div><svg width="14" height="15" style="position:absolute;left:213px;top:500px" shape-rendering="crispEdges"><path d="M6,2H8V14H6V5H4V4H5V3H6Z" fill="#000"/></svg><div class="mono" style="left:228px;top:498px;color:#ffcc00">Frequency ?</div><div style="position:absolute;left:399px;top:482px;width:14px;height:15px;border-radius:50%;background:#00ffff"></div><div class="cn" style="left:399px;top:482px;color:#000">2</div><div class="mono" style="left:414px;top:480px;color:#00ffff">Pk-Pk 2.80V</div><div style="position:absolute;left:585px;top:482px;width:14px;height:15px;border-radius:50%;background:#00ffff"></div><div class="cn" style="left:585px;top:482px;color:#000">2</div><div class="mono" style="left:600px;top:480px;color:#00ffff">Frequency 128.0kHz</div>
<div style="position:absolute;left:1px;top:521px;width:419px;height:20px;box-sizing:border-box;border:1px solid #fff;border-radius:5px;background:#000"></div><div style="position:absolute;left:425px;top:521px;width:168px;height:20px;box-sizing:border-box;border:1px solid #fff;border-radius:5px;background:#000"></div><div style="position:absolute;left:599px;top:521px;width:176px;height:39px;box-sizing:border-box;border:1px solid #fff;border-radius:5px;background:#000"></div><div style="position:absolute;left:3px;top:524px;width:14px;height:15px;border-radius:50%;background:#ffcc00"></div><svg width="14" height="15" style="position:absolute;left:3px;top:524px" shape-rendering="crispEdges"><path d="M6,2H8V14H6V5H4V4H5V3H6Z" fill="#000"/></svg><div style="position:absolute;left:30px;top:528px;width:14px;height:2px;background:#ffcc00"></div><div style="position:absolute;left:30px;top:531px;width:4px;height:2px;background:#ffcc00"></div><div style="position:absolute;left:35px;top:531px;width:4px;height:2px;background:#ffcc00"></div><div style="position:absolute;left:40px;top:531px;width:4px;height:2px;background:#ffcc00"></div><div class="mono" style="left:65px;top:522px;color:#ffcc00">2V</div><div style="position:absolute;left:110px;top:524px;width:14px;height:15px;border-radius:50%;background:#00ffff"></div><div class="cn" style="left:110px;top:524px;color:#000">2</div><div style="position:absolute;left:137px;top:528px;width:14px;height:2px;background:#00ffff"></div><div style="position:absolute;left:137px;top:531px;width:4px;height:2px;background:#00ffff"></div><div style="position:absolute;left:142px;top:531px;width:4px;height:2px;background:#00ffff"></div><div style="position:absolute;left:147px;top:531px;width:4px;height:2px;background:#00ffff"></div><div class="mono" style="left:172px;top:522px;color:#00ffff">2V</div><div style="position:absolute;left:217px;top:524px;width:14px;height:15px;border-radius:50%;background:#ff00ff"></div><div class="cn" style="left:217px;top:524px;color:#000">3</div><div style="position:absolute;left:244px;top:528px;width:14px;height:2px;background:#ff00ff"></div><div style="position:absolute;left:244px;top:531px;width:4px;height:2px;background:#ff00ff"></div><div style="position:absolute;left:249px;top:531px;width:4px;height:2px;background:#ff00ff"></div><div style="position:absolute;left:254px;top:531px;width:4px;height:2px;background:#ff00ff"></div><div class="mono" style="left:279px;top:522px;color:#ff00ff">2V</div><div style="position:absolute;left:324px;top:524px;width:14px;height:15px;border-radius:50%;background:#404040"></div><div class="cn" style="left:324px;top:524px;color:#000">4</div><div style="position:absolute;left:351px;top:528px;width:14px;height:2px;background:#404040"></div><div style="position:absolute;left:351px;top:531px;width:4px;height:2px;background:#404040"></div><div style="position:absolute;left:356px;top:531px;width:4px;height:2px;background:#404040"></div><div style="position:absolute;left:361px;top:531px;width:4px;height:2px;background:#404040"></div><div class="mono" style="left:386px;top:522px;color:#404040">2V</div><div class="mono" style="left:457px;top:522px;color:#fff;letter-spacing:0.5px">2us</div><div style="position:absolute;left:499px;top:524px;width:14px;height:14px;background:#fff;border-radius:4px"></div><div style="position:absolute;left:501px;top:526px;width:2px;height:11px;background:#000"></div><div style="position:absolute;left:509px;top:526px;width:2px;height:11px;background:#000"></div><div style="position:absolute;left:503px;top:529px;width:6px;height:2px;background:#000"></div><div class="mono" style="left:527px;top:522px;color:#fff">39.00ms</div><div style="position:absolute;left:622px;top:524px;width:14px;height:15px;border-radius:50%;background:#ffcc00"></div><svg width="14" height="15" style="position:absolute;left:622px;top:524px" shape-rendering="crispEdges"><path d="M6,2H8V14H6V5H4V4H5V3H6Z" fill="#000"/></svg><svg width="12" height="18" style="position:absolute;left:652px;top:523px"><path d="M6.75,1.5V15.5M3.25,4.5L6.75,1 10.25,4.5M3.25,12.5L6.75,16 10.25,12.5" fill="none" stroke="#ffcc00" stroke-width="1.4"/></svg><div class="mono" style="left:680px;top:522px;color:#ffcc00">1.52V</div><div class="mono" style="left:754px;top:522px;color:#ffcc00;letter-spacing:1.5px">DC</div>
<div class="btn sel" style="left:16px;top:542px;width:110px;height:58px"></div><div class="tx" style="left:51.00px;top:554px;font-size:16px;letter-spacing:0.333px;color:#1c1414;font-weight:normal;">Save</div><div class="tx" style="left:47.00px;top:575px;font-size:16px;letter-spacing:0.250px;color:#1c1414;font-weight:normal;">Image</div><div class="btn" style="left:128px;top:542px;width:110px;height:58px"></div><div class="tx" style="left:164.00px;top:554px;font-size:16px;letter-spacing:0.000px;color:#1c1414;font-weight:normal;">Save</div><div class="tx" style="left:146.00px;top:575px;font-size:16px;letter-spacing:0.571px;color:#1c1414;font-weight:normal;">Waveform</div><div class="btn" style="left:240px;top:542px;width:110px;height:58px"></div><div class="tx" style="left:276.00px;top:554px;font-size:16px;letter-spacing:0.000px;color:#1c1414;font-weight:normal;">Save</div><div class="tx" style="left:273.00px;top:575px;font-size:16px;letter-spacing:0.250px;color:#1c1414;font-weight:normal;">Setup</div><div class="btn" style="left:352px;top:542px;width:110px;height:58px"></div><div class="tx" style="left:381.00px;top:554px;font-size:16px;letter-spacing:0.800px;color:#1c1414;font-weight:normal;">Recall</div><div class="tx" style="left:371.00px;top:575px;font-size:16px;letter-spacing:0.571px;color:#1c1414;font-weight:normal;">Waveform</div><div class="btn" style="left:464px;top:542px;width:110px;height:58px"></div><div class="tx" style="left:493.00px;top:554px;font-size:16px;letter-spacing:0.800px;color:#1c1414;font-weight:normal;">Recall</div><div class="tx" style="left:497.00px;top:575px;font-size:16px;letter-spacing:0.500px;color:#1c1414;font-weight:normal;">Setup</div><div class="btn" style="left:576px;top:542px;width:110px;height:58px"></div><div class="tx" style="left:615.00px;top:553px;font-size:16px;letter-spacing:0.667px;color:#1c1414;font-weight:normal;">Edit</div><div class="tx" style="left:594.00px;top:574px;font-size:16px;letter-spacing:0.333px;color:#1c1414;font-weight:normal;">File Label</div>
</body></html>
